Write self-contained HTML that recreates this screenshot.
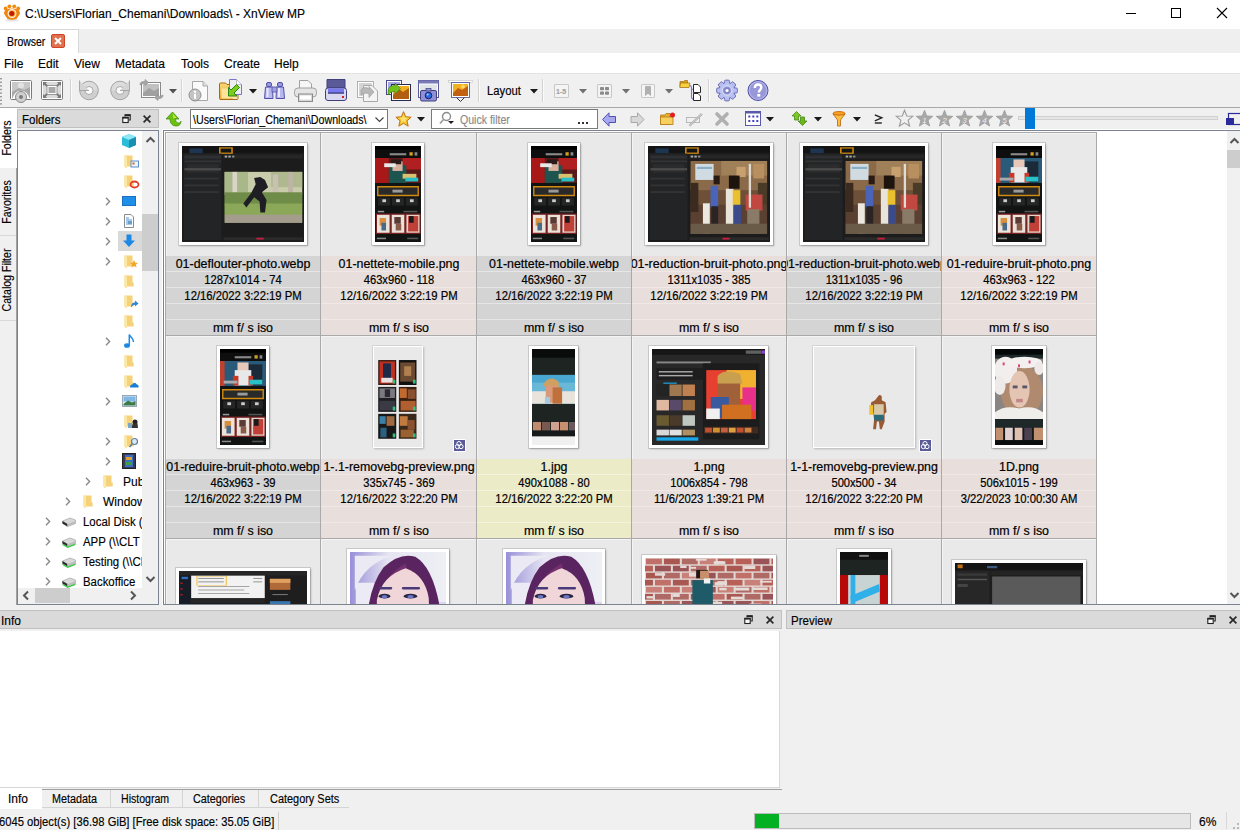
<!DOCTYPE html>
<html><head><meta charset="utf-8">
<style>
*{box-sizing:border-box;margin:0;padding:0}
html,body{width:1240px;height:830px;overflow:hidden;background:#f0f0f0;font-family:"Liberation Sans",sans-serif;font-size:12px;color:#000}
.a{position:absolute}
.t{position:absolute;white-space:nowrap;line-height:14px;-webkit-text-stroke:0.15px currentColor}
svg{position:absolute;overflow:visible}
.sx{transform-origin:0 50%}
.lb{position:absolute;height:16px;line-height:15px;text-align:center;white-space:nowrap;overflow:hidden;color:#111}
.lb span{position:absolute;left:50%;top:1px;white-space:nowrap;color:#000;-webkit-text-stroke:0.2px #000}
.th{position:absolute;background:#fff;padding:3px;box-shadow:0 0 0 1px rgba(0,0,0,.13),1px 1px 2px rgba(0,0,0,.25)}
.th.tr{background:#e9e9e9;border:1px solid #fff;padding:2px;box-shadow:-1px -1px 0 rgba(0,0,0,.08),1px 1px 2px rgba(0,0,0,.22)}
.im{position:relative;overflow:hidden}
.im i{position:absolute;display:block}
.bd{position:absolute;width:12px;height:12px;background:#5a5a9a;border:1px solid #fff;border-radius:1px}
</style></head><body>

<!-- TITLE BAR -->
<div class="a" style="left:0;top:0;width:1240px;height:29px;background:#fff"></div>
<svg style="left:0;top:0" width="26" height="26" viewBox="0 0 26 26">
  <ellipse cx="12" cy="20.3" rx="7" ry="1.2" fill="#e4e4e4"/>
  <circle cx="5.6" cy="8.5" r="1.9" fill="#f28a12"/><circle cx="9.4" cy="6.3" r="1.9" fill="#f28a12"/><circle cx="14.2" cy="6.3" r="1.9" fill="#f28a12"/><circle cx="18.2" cy="8.5" r="1.9" fill="#f28a12"/>
  <path d="M4 13.5Q4 8.5 12 8.5Q20 8.5 20 13.5L16.5 19Q12 20.5 7.5 19Z" fill="#f08410"/>
  <circle cx="12" cy="13.5" r="3.9" fill="#f7a838" stroke="#fff4dc" stroke-width="1.1"/>
  <circle cx="11.8" cy="13.5" r="2.5" fill="#c41a08"/>
</svg>
<div class="t" style="left:25px;top:7px">C:\Users\Florian_Chemani\Downloads\ - XnView MP</div>
<div class="a" style="left:1126px;top:13px;width:10px;height:1px;background:#000"></div>
<div class="a" style="left:1171px;top:8px;width:10px;height:10px;border:1px solid #000"></div>
<svg style="left:1217px;top:8px" width="10" height="10"><path d="M0 0L10 10M10 0L0 10" stroke="#000" stroke-width="1.1"/></svg>

<!-- TAB BAR -->
<div class="a" style="left:0;top:29px;width:1240px;height:23px;background:#efefef"></div>
<div class="a" style="left:0;top:29px;width:79px;height:24px;background:#fff;border-top:1px solid #d8d8d8;border-right:1px solid #d8d8d8"></div>
<div class="t sx" style="left:7px;top:35px;transform:scaleX(0.87)">Browser</div>
<div class="a" style="left:51px;top:34px;width:14px;height:14px;background:#e0714f;border:1px solid #d0442a;border-radius:2px"></div>
<svg style="left:54px;top:37px" width="8" height="8"><path d="M1 1L7 7M7 1L1 7" stroke="#fff" stroke-width="2"/></svg>

<!-- MENU BAR -->
<div class="a" style="left:0;top:53px;width:1240px;height:20px;background:#fff"></div>
<div class="t" style="left:4px;top:57px">File</div>
<div class="t" style="left:38px;top:57px">Edit</div>
<div class="t" style="left:74px;top:57px">View</div>
<div class="t" style="left:115px;top:57px">Metadata</div>
<div class="t" style="left:181px;top:57px">Tools</div>
<div class="t" style="left:224px;top:57px">Create</div>
<div class="t" style="left:274px;top:57px">Help</div>

<!-- TOOLBAR -->
<div class="a" style="left:0;top:73px;width:1240px;height:1px;background:#e3e3e3"></div>
<div class="a" style="left:0;top:107px;width:1240px;height:1px;background:#a8a8a8"></div>
<svg style="left:0;top:78px" width="3" height="27"><rect x="0" y="0.0" width="2" height="1.4" fill="#9a9a9a"/><rect x="0" y="3.6" width="2" height="1.4" fill="#9a9a9a"/><rect x="0" y="7.2" width="2" height="1.4" fill="#9a9a9a"/><rect x="0" y="10.8" width="2" height="1.4" fill="#9a9a9a"/><rect x="0" y="14.4" width="2" height="1.4" fill="#9a9a9a"/><rect x="0" y="18.0" width="2" height="1.4" fill="#9a9a9a"/><rect x="0" y="21.6" width="2" height="1.4" fill="#9a9a9a"/><rect x="0" y="25.2" width="2" height="1.4" fill="#9a9a9a"/></svg>
<svg style="left:10px;top:80px" width="22" height="23" viewBox="0 0 22 23"><rect x="0.5" y="0.5" width="21" height="19" rx="1" fill="#fff" stroke="#7a7a7a"/><rect x="2" y="2" width="18" height="16" fill="#c8c8c8"/><circle cx="11" cy="5.5" r="3" fill="#e2e2e2"/><path d="M2 12L9 8L14 10L20 7V18H2Z" fill="#a8a8a8"/><path d="M3.5 19A7.5 7.5 0 0 1 18.5 19" fill="#fff" stroke="#fff" stroke-width="1.5"/><circle cx="11" cy="17" r="5.5" fill="#d0d0d0" stroke="#8a8a8a"/><circle cx="11" cy="17" r="2" fill="#7a7a7a"/></svg>
<svg style="left:41px;top:80px" width="22" height="20" viewBox="0 0 22 20"><rect x="0.5" y="0.5" width="21" height="19" rx="1" fill="#fff" stroke="#7a7a7a"/><rect x="2" y="2" width="18" height="16" fill="#dadada"/><rect x="6" y="5.5" width="10" height="9" fill="#fff" stroke="#9a9a9a"/><rect x="7.5" y="7" width="7" height="6" fill="#a8a8a8"/><path d="M2.5 2.5L6 6M19.5 2.5L16 6M2.5 17.5L6 14M19.5 17.5L16 14" stroke="#7a7a7a" stroke-width="2"/><path d="M2 2H6L2 6ZM20 2H16L20 6ZM2 18H6L2 14ZM20 18H16L20 14Z" fill="#7a7a7a"/></svg>
<div class="a" style="left:70px;top:79px;width:1px;height:23px;background:#d4d4d4"></div><div class="a" style="left:71px;top:79px;width:1px;height:23px;background:#fafafa"></div>
<svg style="left:78px;top:80px" width="21" height="20" viewBox="0 0 21 20"><circle cx="11" cy="10.5" r="6.8" fill="none" stroke="#cfcfcf" stroke-width="5.5"/><path d="M4.2 10.5A6.8 6.8 0 0 1 17.8 10.5" fill="none" stroke="#dcdcdc" stroke-width="5.5"/><circle cx="11" cy="10.5" r="9.3" fill="none" stroke="#a0a0a0" stroke-width="0.9"/><circle cx="11" cy="10.5" r="4" fill="#fafafa" stroke="#a0a0a0" stroke-width="0.9"/><path d="M1.5 0.5V10.5H11" fill="#d4d4d4" stroke="#a0a0a0" stroke-width="0.9"/></svg>
<svg style="left:110px;top:80px" width="21" height="20" viewBox="0 0 21 20"><circle cx="10" cy="10.5" r="6.8" fill="none" stroke="#cfcfcf" stroke-width="5.5"/><path d="M3.2 10.5A6.8 6.8 0 0 1 16.8 10.5" fill="none" stroke="#dcdcdc" stroke-width="5.5"/><circle cx="10" cy="10.5" r="9.3" fill="none" stroke="#a0a0a0" stroke-width="0.9"/><circle cx="10" cy="10.5" r="4" fill="#fafafa" stroke="#a0a0a0" stroke-width="0.9"/><path d="M19.5 0.5V10.5H10" fill="#d4d4d4" stroke="#a0a0a0" stroke-width="0.9"/></svg>
<svg style="left:139px;top:79px" width="25" height="23" viewBox="0 0 25 23"><rect x="2.5" y="3.5" width="19" height="15" fill="#fff" stroke="#8a8a8a"/><rect x="4" y="5" width="16" height="12" fill="#c0c0c0"/><path d="M4 14L10 9L15 12L20 9V17H4Z" fill="#a0a0a0"/><path d="M1 6C1 3 3 2.5 6 2.5V0.5L9.5 3.5L6 6.5V4.5C4 4.5 3 5 1 6Z" fill="#a8a8a8" stroke="#8a8a8a" stroke-width="0.6"/><path d="M24 16C24 19 22 19.5 19 19.5V21.5L15.5 18.5L19 15.5V17.5C21 17.5 22 17 24 16Z" fill="#a8a8a8" stroke="#8a8a8a" stroke-width="0.6"/></svg>
<svg style="left:169px;top:89px" width="8" height="5"><path d="M0 0H8L4 4.5Z" fill="#505050"/></svg>
<div class="a" style="left:181px;top:79px;width:1px;height:23px;background:#d4d4d4"></div><div class="a" style="left:182px;top:79px;width:1px;height:23px;background:#fafafa"></div>
<svg style="left:188px;top:81px" width="21" height="21" viewBox="0 0 21 21"><path d="M4.5 0.5H15L19.5 5V19.5H4.5Z" fill="#fafafa" stroke="#a8a8a8"/><path d="M15 0.5V5H19.5" fill="#e0e0e0" stroke="#a8a8a8"/><circle cx="7" cy="14" r="6" fill="#c4c4c4" stroke="#909090"/><circle cx="7" cy="10.8" r="1.2" fill="#fff"/><rect x="6" y="12.8" width="2" height="5" fill="#fff"/></svg>
<svg style="left:219px;top:79px" width="24" height="22" viewBox="0 0 24 22"><defs><linearGradient id="fe" x1="0" x2="0" y1="0" y2="1"><stop offset="0" stop-color="#fbd878"/><stop offset="1" stop-color="#e8a830"/></linearGradient></defs><path d="M0.5 5Q0.5 4 1.5 4H6.5L8 5.5H13V20.5H1.5Q0.5 20.5 0.5 19.5Z" fill="url(#fe)" stroke="#a86a10"/><rect x="2.5" y="9.5" width="16" height="10" fill="#fde498"/><path d="M1 20.5H18.5Q19 20.5 19 19.5V14" fill="none" stroke="#a86a10"/><path d="M10.5 0.5H17.5L22.5 5.5V15.5H10.5Z" fill="#eceef2" stroke="#7878c8"/><path d="M17.5 0.5V5.5H22.5" fill="#fff" stroke="#9a9aa8" stroke-width="0.6"/><path d="M9.5 8.5V17H18L15 14L20.5 8.5L17.5 5.5L12 11Z" fill="#7ccc1c" stroke="#1a7a10" stroke-width="0.9"/></svg>
<svg style="left:249px;top:89px" width="8" height="5"><path d="M0 0H8L4 4.5Z" fill="#1a1a1a"/></svg>
<svg style="left:264px;top:82px" width="21" height="17" viewBox="0 0 21 17"><rect x="2.5" y="0.5" width="5" height="4" rx="1.5" fill="#9a9ae0" stroke="#5050a8"/><rect x="13.5" y="0.5" width="5" height="4" rx="1.5" fill="#9a9ae0" stroke="#5050a8"/><path d="M1.5 5H8.5L9 16.5H0.5Z" fill="#b8b8f0" stroke="#5050a8"/><path d="M12.5 5H19.5L20.5 16.5H12Z" fill="#b8b8f0" stroke="#5050a8"/><rect x="8" y="5" width="5" height="5" fill="#a0a0e0" stroke="#5050a8" stroke-width="0.8"/><rect x="2.5" y="6" width="2" height="9" fill="#e8e8ff"/><rect x="14" y="6" width="2" height="9" fill="#e8e8ff"/></svg>
<svg style="left:294px;top:80px" width="23" height="22" viewBox="0 0 23 22"><path d="M5.5 0.5H14L17.5 4V8.5H5.5Z" fill="#f6f6f6" stroke="#a0a0a0"/><rect x="0.5" y="8" width="22" height="9" rx="3.5" fill="#e4e4e4" stroke="#a0a0a0"/><rect x="4.5" y="14" width="14" height="7.5" fill="#d8d8d8" stroke="#8a8a8a"/><rect x="6" y="15.5" width="11" height="4" fill="#fff"/></svg>
<svg style="left:325px;top:79px" width="22" height="22" viewBox="0 0 22 22"><path d="M2 0.5H20V9H2Z" fill="#5a5a98" stroke="#40407a"/><rect x="0.5" y="9" width="21" height="12.5" rx="2.5" fill="#d8d8f0" stroke="#40407a"/><rect x="3" y="9.5" width="16" height="4.5" fill="#7878f0"/><rect x="3" y="13.5" width="16" height="1.2" fill="#30306a"/><rect x="17" y="17" width="2" height="2" fill="#d02020"/></svg>
<svg style="left:357px;top:81px" width="22" height="21" viewBox="0 0 22 21"><rect x="0.5" y="0.5" width="16" height="16" fill="#fff" stroke="#b0b0b0"/><rect x="2" y="2" width="13" height="13" fill="#d4d4d4"/><path d="M6.5 4.5H15L20.5 10V20.5H6.5Z" fill="#f4f4f4" stroke="#a8a8a8"/><path d="M4 9C6 6 10 6 12 8V5.5L17 11L12 16.5V13C10 11.5 7 12 4 14Z" fill="#b8b8b8" stroke="#999" stroke-width="0.6"/></svg>
<svg style="left:386px;top:80px" width="25" height="21" viewBox="0 0 25 21"><rect x="0.5" y="0.5" width="15" height="14" fill="#fff" stroke="#4a4a8a"/><rect x="2" y="2" width="12" height="11" fill="#a8a8e8"/><rect x="5.5" y="4.5" width="19" height="16" fill="#fff" stroke="#2a2a4a"/><rect x="7" y="6" width="16" height="13" fill="#f0b020"/><path d="M7 15L13 9L17 12L23 8V19H7Z" fill="#b06010"/><path d="M2 11C2 7 5 5.5 9 5.5V3L14.5 8.5L9 14V11.5C6 11.5 4 12 2 15Z" fill="#70c020" stroke="#408010" stroke-width="0.6"/></svg>
<svg style="left:418px;top:80px" width="22" height="22" viewBox="0 0 22 22"><rect x="0.5" y="0.5" width="20" height="17" fill="#fff" stroke="#5a5a9a"/><rect x="0.5" y="0.5" width="20" height="3" fill="#7a7ab8"/><rect x="2" y="4.5" width="17" height="12" fill="#e0e4e8"/><rect x="2.5" y="10.5" width="16" height="10.5" rx="1.5" fill="#9090d8" stroke="#40407a"/><rect x="8" y="8.5" width="5" height="2.5" fill="#9090d8" stroke="#40407a" stroke-width="0.7"/><circle cx="10.5" cy="15.5" r="3.3" fill="#2a6ae0" stroke="#20205a"/><circle cx="9.6" cy="14.6" r="1" fill="#a0c8ff"/></svg>
<svg style="left:448px;top:80px" width="25" height="22" viewBox="0 0 25 22"><rect x="0.5" y="0.5" width="24" height="2" fill="#fff" stroke="#c0c0c0" stroke-width="0.6"/><rect x="3.5" y="2.5" width="18" height="15" fill="#fff" stroke="#6a6aa8"/><rect x="5" y="4" width="15" height="12" fill="#f0b020"/><path d="M5 13L10 8L14 10L20 6V16H5Z" fill="#c06010"/><circle cx="15" cy="6.5" r="2" fill="#ffd860"/><path d="M8.5 17.5L12.5 21.5L16.5 17.5" stroke="#303030" fill="none" stroke-width="1"/></svg>
<div class="a" style="left:478px;top:79px;width:1px;height:23px;background:#d4d4d4"></div><div class="a" style="left:479px;top:79px;width:1px;height:23px;background:#fafafa"></div>
<div class="t sx" style="left:487px;top:84px;transform:scaleX(0.94)">Layout</div>
<svg style="left:530px;top:89px" width="8" height="5"><path d="M0 0H8L4 4.5Z" fill="#1a1a1a"/></svg>
<div class="a" style="left:542px;top:79px;width:1px;height:23px;background:#d4d4d4"></div><div class="a" style="left:543px;top:79px;width:1px;height:23px;background:#fafafa"></div>
<div class="a" style="left:554px;top:84px;width:15px;height:14px;background:#f4f4f4;border:1px solid #c8c8c8;border-radius:1px"></div><div class="t" style="left:556px;top:85px;font-size:7px;color:#a0a0a0;font-weight:bold">1-5</div>
<svg style="left:579px;top:89px" width="8" height="5"><path d="M0 0H8L4 4.5Z" fill="#707070"/></svg>
<div class="a" style="left:597px;top:84px;width:15px;height:14px;background:#f4f4f4;border:1px solid #c8c8c8;border-radius:1px"></div><svg style="left:600px;top:87px" width="9" height="8"><rect x="0" y="0" width="4" height="3.3" rx="0.8" fill="#8a8a8a"/><rect x="5" y="0" width="4" height="3.3" rx="0.8" fill="#8a8a8a"/><rect x="0" y="4.5" width="4" height="3.3" rx="0.8" fill="#8a8a8a"/><rect x="5" y="4.5" width="4" height="3.3" rx="0.8" fill="#8a8a8a"/></svg>
<svg style="left:622px;top:89px" width="8" height="5"><path d="M0 0H8L4 4.5Z" fill="#707070"/></svg>
<div class="a" style="left:641px;top:84px;width:14px;height:14px;background:#f4f4f4;border:1px solid #c8c8c8;border-radius:1px"></div><svg style="left:645px;top:86px" width="6" height="10"><path d="M0.5 0.5H5.5V9.5L3 7L0.5 9.5Z" fill="#b0b0b0" stroke="#9a9a9a" stroke-width="0.6"/></svg>
<svg style="left:665px;top:89px" width="8" height="5"><path d="M0 0H8L4 4.5Z" fill="#707070"/></svg>
<svg style="left:679px;top:80px" width="23" height="21" viewBox="0 0 23 21"><path d="M1 1.5H4.5L5.5 0.5H8.5V7H1Z" fill="#d8a020" stroke="#a07010" stroke-width="0.7"/><path d="M1.5 3H11L10 7.5H0.8Z" fill="#f8d040" stroke="#a07010" stroke-width="0.7"/><path d="M10.5 5.5Q12.5 5.5 12.5 8V17Q12.5 19 14.5 19M12.5 10.5Q12.5 9 14.5 9" stroke="#7a7ac8" fill="none" stroke-width="1.1"/><path d="M14.5 4.5H19L21.5 7V12.5H14.5Z" fill="#fff" stroke="#111" stroke-width="0.9"/><path d="M14.5 13.5H19L21.5 16V20.5H14.5Z" fill="#fff" stroke="#111" stroke-width="0.9"/></svg>
<div class="a" style="left:708px;top:79px;width:1px;height:23px;background:#d4d4d4"></div><div class="a" style="left:709px;top:79px;width:1px;height:23px;background:#fafafa"></div>
<svg style="left:716px;top:80px" width="22" height="21" viewBox="-11 -10.5 22 21"><circle r="8" fill="#b4bcf0" stroke="#5a5aa8" stroke-width="0.8"/><rect x="-2.6" y="-10.4" width="5.2" height="4.5" rx="1.3" fill="#b4bcf0" stroke="#5a5aa8" stroke-width="0.8" transform="rotate(0)"/><rect x="-2.6" y="-10.4" width="5.2" height="4.5" rx="1.3" fill="#b4bcf0" stroke="#5a5aa8" stroke-width="0.8" transform="rotate(45)"/><rect x="-2.6" y="-10.4" width="5.2" height="4.5" rx="1.3" fill="#b4bcf0" stroke="#5a5aa8" stroke-width="0.8" transform="rotate(90)"/><rect x="-2.6" y="-10.4" width="5.2" height="4.5" rx="1.3" fill="#b4bcf0" stroke="#5a5aa8" stroke-width="0.8" transform="rotate(135)"/><rect x="-2.6" y="-10.4" width="5.2" height="4.5" rx="1.3" fill="#b4bcf0" stroke="#5a5aa8" stroke-width="0.8" transform="rotate(180)"/><rect x="-2.6" y="-10.4" width="5.2" height="4.5" rx="1.3" fill="#b4bcf0" stroke="#5a5aa8" stroke-width="0.8" transform="rotate(225)"/><rect x="-2.6" y="-10.4" width="5.2" height="4.5" rx="1.3" fill="#b4bcf0" stroke="#5a5aa8" stroke-width="0.8" transform="rotate(270)"/><rect x="-2.6" y="-10.4" width="5.2" height="4.5" rx="1.3" fill="#b4bcf0" stroke="#5a5aa8" stroke-width="0.8" transform="rotate(315)"/><circle r="7.4" fill="#bcc4f2"/><circle r="4.6" fill="#9494d4" stroke="#e2e6ff" stroke-width="0.9"/><circle r="3" fill="#8282c6"/><circle r="1.6" fill="#fff"/></svg>
<svg style="left:747px;top:80px" width="22" height="21" viewBox="0 0 22 21"><circle cx="11" cy="10.5" r="10" fill="#9898d8" stroke="#5050a8"/><circle cx="11" cy="10.5" r="8.8" fill="none" stroke="#c0c0f0" stroke-width="0.8"/><path d="M7.8 8C7.8 5.5 9.5 4.5 11 4.5C13 4.5 14.3 5.8 14.3 7.6C14.3 9.8 11.8 10 11.8 12.5" stroke="#fff" stroke-width="2.4" fill="none"/><rect x="10.3" y="14" width="3" height="2.6" fill="#fff"/></svg>
<svg style="left:166px;top:112px" width="16" height="15" viewBox="0 0 16 15"><path d="M6.5 0L13 7H9.5C9.5 9.5 10.5 11 12.5 11C13.5 11 14.5 10.3 15 9.3C15 12.5 13 14 10.5 14C6.5 14 4 11.5 4 7H0Z" fill="#6cc010" stroke="#3a8a0a" stroke-width="0.7"/><path d="M6.5 1.5L10.5 6H8V7.5" fill="#c8f040" /></svg>
<div class="a" style="left:190px;top:109px;width:198px;height:20px;background:#fff;border:1px solid #7a7a7a"></div>
<div class="t sx" style="left:193px;top:113px;transform:scaleX(0.888)">\Users\Florian_Chemani\Downloads\</div>
<svg style="left:375px;top:117px" width="9" height="6"><path d="M0.5 0.5L4.5 4.5L8.5 0.5" stroke="#404040" stroke-width="1.1" fill="none"/></svg>
<svg style="left:395px;top:111px" width="17" height="16" viewBox="0 0 17 16"><path d="M8.50 0.70L10.62 5.79L16.11 6.23L11.92 9.81L13.20 15.17L8.50 12.30L3.80 15.17L5.08 9.81L0.89 6.23L6.38 5.79Z" fill="#f8c830" stroke="#c07010" stroke-width="1"/><path d="M8.50 3.70L9.68 6.58L12.78 6.81L10.40 8.82L11.15 11.84L8.50 10.20L5.85 11.84L6.60 8.82L4.22 6.81L7.32 6.58Z" fill="#fff3a0" opacity="0.6"/></svg>
<svg style="left:417px;top:117px" width="8" height="5"><path d="M0 0H8L4 4.5Z" fill="#1a1a1a"/></svg>
<div class="a" style="left:431px;top:109px;width:167px;height:20px;background:#fff;border:1px solid #7a7a7a"></div>
<svg style="left:439px;top:111px" width="16" height="14" viewBox="0 0 16 14"><circle cx="7.5" cy="5.5" r="4" fill="none" stroke="#8a8a8a" stroke-width="1.4"/><path d="M4.5 8.5L1 12.5" stroke="#9a9a9a" stroke-width="1.6"/><path d="M9 10H15L12 13Z" fill="#1a1a1a"/></svg>
<div class="t sx" style="left:460px;top:113px;color:#8a8a8a;transform:scaleX(0.88)">Quick filter</div>
<svg style="left:578px;top:122px" width="11" height="3"><rect x="0" y="0" width="2" height="2" fill="#333"/><rect x="4" y="0" width="2" height="2" fill="#333"/><rect x="8" y="0" width="2" height="2" fill="#333"/></svg>
<svg style="left:602px;top:112px" width="15" height="15" viewBox="0 0 15 15"><path d="M0.5 7.5L7 0.8V4.5H13.5V10.5H7V14.2Z" fill="#a8a8f0" stroke="#5050b0" stroke-width="1"/></svg>
<svg style="left:630px;top:112px" width="15" height="15" viewBox="0 0 15 15"><path d="M14 7.5L7.5 0.8V4.5H1V10.5H7.5V14.2Z" fill="#d8d8d8" stroke="#a8a8a8" stroke-width="1"/></svg>
<svg style="left:660px;top:112px" width="16" height="14" viewBox="0 0 16 14"><path d="M0.5 3H5L6 1.5H10V12.5H0.5Z" fill="#e8b030" stroke="#b07a10" stroke-width="0.8"/><path d="M0.5 5H13V12.5H0.5Z" fill="#f8d060" stroke="#b07a10" stroke-width="0.8"/><circle cx="12.5" cy="3" r="2.5" fill="#e02020"/></svg>
<svg style="left:686px;top:112px" width="17" height="14" viewBox="0 0 17 14"><rect x="0.5" y="5.5" width="13" height="5" fill="#f0f0f0" stroke="#b8b8b8"/><path d="M3 13L15 1.5L16.3 2.8L4.3 14Z" fill="#c8c8c8" stroke="#a0a0a0" stroke-width="0.6"/></svg>
<svg style="left:715px;top:112px" width="14" height="14" viewBox="0 0 14 14"><path d="M2 2L12 12M12 2L2 12" stroke="#b0b0b0" stroke-width="3.6" stroke-linecap="round"/></svg>
<svg style="left:745px;top:111px" width="16" height="15" viewBox="0 0 16 15"><rect x="0.5" y="0.5" width="15" height="14" fill="#fff" stroke="#5a5aa8"/><rect x="0.5" y="0.5" width="15" height="2" fill="#5a5aa8"/><rect x="3.3" y="4.5" width="2" height="2" fill="#4040c8"/><rect x="3.3" y="9.0" width="2" height="2" fill="#4040c8"/><rect x="7.3" y="4.5" width="2" height="2" fill="#4040c8"/><rect x="7.3" y="9.0" width="2" height="2" fill="#4040c8"/><rect x="11.3" y="4.5" width="2" height="2" fill="#4040c8"/><rect x="11.3" y="9.0" width="2" height="2" fill="#4040c8"/></svg>
<svg style="left:766px;top:117px" width="8" height="5"><path d="M0 0H8L4 4.5Z" fill="#1a1a1a"/></svg>
<svg style="left:792px;top:111px" width="15" height="15" viewBox="0 0 15 15"><path d="M4.5 0.5L9 5H6.5V9H2.5V5H0Z" fill="#80c820" stroke="#3a8010" stroke-width="0.7"/><path d="M10.5 14.5L15 10H12.5V6H8.5V10H6Z" fill="#70b818" stroke="#3a8010" stroke-width="0.7"/></svg>
<svg style="left:814px;top:117px" width="8" height="5"><path d="M0 0H8L4 4.5Z" fill="#1a1a1a"/></svg>
<svg style="left:832px;top:111px" width="14" height="16" viewBox="0 0 14 16"><ellipse cx="7" cy="2.5" rx="6" ry="2" fill="#f8a020" stroke="#c06010" stroke-width="0.8"/><path d="M1 3L5.5 9V15H8.5V9L13 3C11 4.5 3 4.5 1 3Z" fill="#f8c040" stroke="#c06010" stroke-width="0.8"/></svg>
<svg style="left:853px;top:117px" width="8" height="5"><path d="M0 0H8L4 4.5Z" fill="#1a1a1a"/></svg>
<svg style="left:874px;top:114px" width="9" height="10"><path d="M0.8 0.8L7.8 3.8L0.8 6.8" stroke="#222" stroke-width="1.4" fill="none"/><path d="M0.8 9H7.8" stroke="#222" stroke-width="1.4"/></svg>
<svg style="left:895px;top:109px" width="19" height="19" viewBox="0 0 19 19"><path d="M9.50 1.30L11.73 6.93L17.77 7.31L13.11 11.17L14.61 17.04L9.50 13.80L4.39 17.04L5.89 11.17L1.23 7.31L7.27 6.93Z" fill="#f0f0f0" stroke="#9a9a9a" stroke-width="1.1"/></svg>
<svg style="left:915px;top:109px" width="19" height="19" viewBox="0 0 19 19"><path d="M9.50 1.30L11.73 6.93L17.77 7.31L13.11 11.17L14.61 17.04L9.50 13.80L4.39 17.04L5.89 11.17L1.23 7.31L7.27 6.93Z" fill="#a8a8a8" stroke="#9a9a9a" stroke-width="0.8"/><text x="9.5" y="14" font-size="8" text-anchor="middle" fill="#eee" font-family="Liberation Sans" font-style="italic">1</text></svg>
<svg style="left:935px;top:109px" width="19" height="19" viewBox="0 0 19 19"><path d="M9.50 1.30L11.73 6.93L17.77 7.31L13.11 11.17L14.61 17.04L9.50 13.80L4.39 17.04L5.89 11.17L1.23 7.31L7.27 6.93Z" fill="#a8a8a8" stroke="#9a9a9a" stroke-width="0.8"/><text x="9.5" y="14" font-size="8" text-anchor="middle" fill="#eee" font-family="Liberation Sans" font-style="italic">2</text></svg>
<svg style="left:955px;top:109px" width="19" height="19" viewBox="0 0 19 19"><path d="M9.50 1.30L11.73 6.93L17.77 7.31L13.11 11.17L14.61 17.04L9.50 13.80L4.39 17.04L5.89 11.17L1.23 7.31L7.27 6.93Z" fill="#a8a8a8" stroke="#9a9a9a" stroke-width="0.8"/><text x="9.5" y="14" font-size="8" text-anchor="middle" fill="#eee" font-family="Liberation Sans" font-style="italic">3</text></svg>
<svg style="left:975px;top:109px" width="19" height="19" viewBox="0 0 19 19"><path d="M9.50 1.30L11.73 6.93L17.77 7.31L13.11 11.17L14.61 17.04L9.50 13.80L4.39 17.04L5.89 11.17L1.23 7.31L7.27 6.93Z" fill="#a8a8a8" stroke="#9a9a9a" stroke-width="0.8"/><text x="9.5" y="14" font-size="8" text-anchor="middle" fill="#eee" font-family="Liberation Sans" font-style="italic">4</text></svg>
<svg style="left:995px;top:109px" width="19" height="19" viewBox="0 0 19 19"><path d="M9.50 1.30L11.73 6.93L17.77 7.31L13.11 11.17L14.61 17.04L9.50 13.80L4.39 17.04L5.89 11.17L1.23 7.31L7.27 6.93Z" fill="#a8a8a8" stroke="#9a9a9a" stroke-width="0.8"/><text x="9.5" y="14" font-size="8" text-anchor="middle" fill="#eee" font-family="Liberation Sans" font-style="italic">5</text></svg>
<div class="a" style="left:1018px;top:116px;width:200px;height:4px;background:#e6e6e6;border:1px solid #d0d0d0"></div>
<div class="a" style="left:1025px;top:108px;width:10px;height:21px;background:#0078d7"></div>
<svg style="left:1226px;top:113px" width="14" height="12"><rect x="2.5" y="0.5" width="13" height="11" fill="none" stroke="#2a2a9a" stroke-width="1.2"/><rect x="0" y="5" width="8" height="7" fill="#2a2a9a"/></svg>

<!-- LEFT VERTICAL TABS -->
<div class="a" style="left:0;top:108px;width:17px;height:500px;background:#f0f0f0"></div>
<div class="a" style="left:16px;top:168px;width:1px;height:437px;background:#a0a0a0"></div>
<div class="a" style="left:0;top:108px;width:17px;height:60px;background:#fff"></div>
<div class="a" style="left:0;top:235px;width:16px;height:1px;background:#d9d9d9"></div>
<div class="a" style="left:0;top:320px;width:16px;height:1px;background:#d9d9d9"></div>
<div class="t" style="left:7px;top:137.5px;transform:translate(-50%,-50%) rotate(-90deg) scaleX(0.88);font-size:12px">Folders</div>
<div class="t" style="left:7px;top:202px;transform:translate(-50%,-50%) rotate(-90deg) scaleX(0.88);font-size:12px">Favorites</div>
<div class="t" style="left:7px;top:280px;transform:translate(-50%,-50%) rotate(-90deg) scaleX(0.88);font-size:12px">Catalog Filter</div>

<!-- FOLDERS PANEL -->
<div class="a" style="left:17px;top:109px;width:142px;height:19px;background:#dadada;border:1px solid #c0c0c0"></div>
<div class="t sx" style="left:22px;top:113px;transform:scaleX(0.96)">Folders</div>
<svg style="left:122px;top:114px" width="9" height="9" viewBox="0 0 9 9"><path d="M3 2.5V0.8H8.2V6H6.5" stroke="#222" stroke-width="1.1" fill="none"/><rect x="3" y="0.5" width="5.5" height="1.6" fill="#222"/><rect x="0.8" y="3.3" width="5.4" height="5.2" fill="#fafafa" stroke="#222" stroke-width="1.1"/><rect x="0.5" y="3" width="6" height="1.6" fill="#222"/></svg><svg style="left:143px;top:115px" width="8" height="8"><path d="M0.6 0.6L7.4 7.4M7.4 0.6L0.6 7.4" stroke="#2a2a2a" stroke-width="1.7"/></svg>
<div class="a" style="left:17px;top:130px;width:142px;height:475px;background:#fff;border:1px solid #7b8290"></div>
<div class="a" style="left:18px;top:131px;width:124px;height:457px;overflow:hidden;background:#fff">
<svg style="left:103px;top:2px" width="16" height="16" viewBox="0 0 16 16"><path d="M8 1L15 4V12L8 15L1 12V4Z" fill="#2bbcd8"/><path d="M8 1L15 4L8 7L1 4Z" fill="#8fe6f4"/><path d="M8 7L15 4V12L8 15Z" fill="#1a8fb0"/></svg>
<div class="a" style="left:105px;top:22px"><svg style="left:0px;top:0px" width="16" height="16" viewBox="0 0 16 16"><path d="M1.5 2.5H9.5V9.5H10.7V13.5H4L3.2 15.3L1.5 13.5Z" fill="#f5d27a"/><path d="M1.5 2.5L4 3.8V14.6L3.2 15.3L1.5 13.5Z" fill="#fbe7a6"/><rect x="8" y="8" width="7.5" height="6" fill="#eef4fb" stroke="#5b8fc9" stroke-width="1"/><rect x="9.5" y="9.5" width="2" height="2" fill="#d06030"/></svg></div>
<div class="a" style="left:105px;top:42px"><svg style="left:0px;top:0px" width="16" height="16" viewBox="0 0 16 16"><path d="M1.5 2.5H9.5V9.5H10.7V13.5H4L3.2 15.3L1.5 13.5Z" fill="#f5d27a"/><path d="M1.5 2.5L4 3.8V14.6L3.2 15.3L1.5 13.5Z" fill="#fbe7a6"/><ellipse cx="11.5" cy="11.5" rx="4" ry="3" fill="none" stroke="#e03a2a" stroke-width="1.8"/></svg></div>
<div class="a" style="left:104px;top:65px;width:14px;height:10px;background:#1e8fe8;border:1px solid #1a6fc0"></div>
<svg style="left:103px;top:82px" width="16" height="16" viewBox="0 0 16 16"><path d="M3.5 1.5H10L12.5 4V14.5H3.5Z" fill="#fff" stroke="#8a8a8a"/><path d="M5 5H8M5 7H11M5 9H11M5 11H11" stroke="#4a90d8" stroke-width="1"/><rect x="7" y="8" width="4" height="3" fill="#6aa0c8"/></svg>
<div class="a" style="left:100px;top:100px;width:24px;height:20px;background:#d9d9d9"></div>
<svg style="left:103px;top:102px" width="16" height="16" viewBox="0 0 16 16"><path d="M5.5 1.5H10.5V7.5H14L8 14L2 7.5H5.5Z" fill="#1e88e5"/></svg>
<div class="a" style="left:105px;top:122px"><svg style="left:0px;top:0px" width="16" height="16" viewBox="0 0 16 16"><path d="M1.5 2.5H9.5V9.5H10.7V13.5H4L3.2 15.3L1.5 13.5Z" fill="#f5d27a"/><path d="M1.5 2.5L4 3.8V14.6L3.2 15.3L1.5 13.5Z" fill="#fbe7a6"/><path d="M11 7L12.2 9.8L15 10L12.8 11.8L13.6 14.6L11 13L8.4 14.6L9.2 11.8L7 10L9.8 9.8Z" fill="#f5a623"/></svg></div>
<div class="a" style="left:105px;top:142px"><svg style="left:0px;top:0px" width="16" height="16" viewBox="0 0 16 16"><path d="M1.5 2.5H9.5V9.5H10.7V13.5H4L3.2 15.3L1.5 13.5Z" fill="#f5d27a"/><path d="M1.5 2.5L4 3.8V14.6L3.2 15.3L1.5 13.5Z" fill="#fbe7a6"/></svg></div>
<div class="a" style="left:105px;top:162px"><svg style="left:0px;top:0px" width="16" height="16" viewBox="0 0 16 16"><path d="M1.5 2.5H9.5V9.5H10.7V13.5H4L3.2 15.3L1.5 13.5Z" fill="#f5d27a"/><path d="M1.5 2.5L4 3.8V14.6L3.2 15.3L1.5 13.5Z" fill="#fbe7a6"/><path d="M8 14.5C8 11 9.5 9.5 12 9.5V7.5L15.5 10.5L12 13.5V11.8C10.5 11.8 9.5 12.5 8 14.5Z" fill="#2a86d8"/></svg></div>
<div class="a" style="left:105px;top:182px"><svg style="left:0px;top:0px" width="16" height="16" viewBox="0 0 16 16"><path d="M1.5 2.5H9.5V9.5H10.7V13.5H4L3.2 15.3L1.5 13.5Z" fill="#f5d27a"/><path d="M1.5 2.5L4 3.8V14.6L3.2 15.3L1.5 13.5Z" fill="#fbe7a6"/></svg></div>
<svg style="left:103px;top:202px" width="16" height="16" viewBox="0 0 16 16"><ellipse cx="6" cy="12.5" rx="3" ry="2.3" fill="#1e88e5"/><path d="M8.3 12.5V1.5C9 4 12.5 5 12.5 9" stroke="#1e88e5" stroke-width="1.5" fill="none"/></svg>
<div class="a" style="left:105px;top:222px"><svg style="left:0px;top:0px" width="16" height="16" viewBox="0 0 16 16"><path d="M1.5 2.5H9.5V9.5H10.7V13.5H4L3.2 15.3L1.5 13.5Z" fill="#f5d27a"/><path d="M1.5 2.5L4 3.8V14.6L3.2 15.3L1.5 13.5Z" fill="#fbe7a6"/></svg></div>
<div class="a" style="left:105px;top:242px"><svg style="left:0px;top:0px" width="16" height="16" viewBox="0 0 16 16"><path d="M1.5 2.5H9.5V9.5H10.7V13.5H4L3.2 15.3L1.5 13.5Z" fill="#f5d27a"/><path d="M1.5 2.5L4 3.8V14.6L3.2 15.3L1.5 13.5Z" fill="#fbe7a6"/><path d="M7 14.5H15.5C16 12.5 15 11.5 13.8 11.6C13.3 9.5 10 9.3 9.5 11.5C8 11.3 7 12.5 7 14.5Z" fill="#1a7fd4"/></svg></div>
<svg style="left:104px;top:264px" width="15" height="12" viewBox="0 0 15 12"><rect x="0.5" y="0.5" width="14" height="11" fill="#dfe8ef" stroke="#9aa8b4"/><rect x="1.5" y="1.5" width="12" height="5" fill="#7fb8e6"/><path d="M1.5 9L6 5.5L10 7.5L13.5 6V10.5H1.5Z" fill="#3c7a4a"/></svg>
<div class="a" style="left:105px;top:282px"><svg style="left:0px;top:0px" width="16" height="16" viewBox="0 0 16 16"><path d="M1.5 2.5H9.5V9.5H10.7V13.5H4L3.2 15.3L1.5 13.5Z" fill="#f5d27a"/><path d="M1.5 2.5L4 3.8V14.6L3.2 15.3L1.5 13.5Z" fill="#fbe7a6"/><circle cx="12" cy="9" r="2.5" fill="#222"/><path d="M8 15L10 10.5H14.5L15 15Z" fill="#333"/><rect x="5" y="10" width="4" height="5" fill="#7aa6c8"/></svg></div>
<div class="a" style="left:105px;top:302px"><svg style="left:0px;top:0px" width="16" height="16" viewBox="0 0 16 16"><path d="M1.5 2.5H9.5V9.5H10.7V13.5H4L3.2 15.3L1.5 13.5Z" fill="#f5d27a"/><path d="M1.5 2.5L4 3.8V14.6L3.2 15.3L1.5 13.5Z" fill="#fbe7a6"/><circle cx="11.5" cy="8.5" r="3" fill="#dceaf6" stroke="#5a7fa0" stroke-width="1.2"/><path d="M9.3 10.8L6.5 14" stroke="#5a7fa0" stroke-width="1.6"/></svg></div>
<svg style="left:104px;top:322px" width="14" height="16" viewBox="0 0 14 16"><rect x="0.5" y="0.5" width="13" height="15" fill="#3a3a5a" stroke="#222"/><rect x="3" y="2" width="8" height="12" fill="#3a70c0"/><rect x="4" y="4" width="6" height="3" fill="#e0a030"/><rect x="4" y="9" width="6" height="3" fill="#40a040"/></svg>
<svg style="left:87px;top:66px" width="6" height="9"><path d="M1 0.8L4.6 4.5L1 8.2" stroke="#8a8a8a" stroke-width="1.4" fill="none"/></svg>
<svg style="left:87px;top:86px" width="6" height="9"><path d="M1 0.8L4.6 4.5L1 8.2" stroke="#8a8a8a" stroke-width="1.4" fill="none"/></svg>
<svg style="left:87px;top:106px" width="6" height="9"><path d="M1 0.8L4.6 4.5L1 8.2" stroke="#8a8a8a" stroke-width="1.4" fill="none"/></svg>
<svg style="left:87px;top:126px" width="6" height="9"><path d="M1 0.8L4.6 4.5L1 8.2" stroke="#8a8a8a" stroke-width="1.4" fill="none"/></svg>
<svg style="left:87px;top:206px" width="6" height="9"><path d="M1 0.8L4.6 4.5L1 8.2" stroke="#8a8a8a" stroke-width="1.4" fill="none"/></svg>
<svg style="left:87px;top:266px" width="6" height="9"><path d="M1 0.8L4.6 4.5L1 8.2" stroke="#8a8a8a" stroke-width="1.4" fill="none"/></svg>
<svg style="left:87px;top:306px" width="6" height="9"><path d="M1 0.8L4.6 4.5L1 8.2" stroke="#8a8a8a" stroke-width="1.4" fill="none"/></svg>
<svg style="left:87px;top:326px" width="6" height="9"><path d="M1 0.8L4.6 4.5L1 8.2" stroke="#8a8a8a" stroke-width="1.4" fill="none"/></svg>
<svg style="left:67px;top:346px" width="6" height="9"><path d="M1 0.8L4.6 4.5L1 8.2" stroke="#8a8a8a" stroke-width="1.4" fill="none"/></svg>
<div class="a" style="left:84px;top:342px"><svg style="left:0px;top:0px" width="16" height="16" viewBox="0 0 16 16"><path d="M1.5 2.5H9.5V9.5H10.7V13.5H4L3.2 15.3L1.5 13.5Z" fill="#f5d27a"/><path d="M1.5 2.5L4 3.8V14.6L3.2 15.3L1.5 13.5Z" fill="#fbe7a6"/></svg></div>
<div class="t" style="left:105px;top:344px">Pub</div>
<svg style="left:47px;top:366px" width="6" height="9"><path d="M1 0.8L4.6 4.5L1 8.2" stroke="#8a8a8a" stroke-width="1.4" fill="none"/></svg>
<div class="a" style="left:64px;top:362px"><svg style="left:0px;top:0px" width="16" height="16" viewBox="0 0 16 16"><path d="M1.5 2.5H9.5V9.5H10.7V13.5H4L3.2 15.3L1.5 13.5Z" fill="#f5d27a"/><path d="M1.5 2.5L4 3.8V14.6L3.2 15.3L1.5 13.5Z" fill="#fbe7a6"/></svg></div>
<div class="t" style="left:85px;top:364px">Windows</div>
<svg style="left:27px;top:386px" width="6" height="9"><path d="M1 0.8L4.6 4.5L1 8.2" stroke="#8a8a8a" stroke-width="1.4" fill="none"/></svg>
<svg style="left:43px;top:382px" width="16" height="16" viewBox="0 0 16 16"><path d="M1.5 8L9 5L14.5 7V10.5L6.5 13.5L1.5 10.5Z" fill="#d8d8d8" stroke="#9a9a9a" stroke-width="0.6"/><path d="M1.5 8L6.5 11V13.5L1.5 10.5Z" fill="#2a2a2a"/><path d="M6.5 11L14.5 8V10.5L6.5 13.5Z" fill="#bdbdbd"/></svg>
<div class="t sx" style="left:65px;top:384px;transform:scaleX(0.95)">Local Disk (C:)</div>
<svg style="left:27px;top:406px" width="6" height="9"><path d="M1 0.8L4.6 4.5L1 8.2" stroke="#8a8a8a" stroke-width="1.4" fill="none"/></svg>
<svg style="left:43px;top:402px" width="16" height="16" viewBox="0 0 16 16"><path d="M1.5 8L9 5L14.5 7V10.5L6.5 13.5L1.5 10.5Z" fill="#d8d8d8" stroke="#9a9a9a" stroke-width="0.6"/><path d="M1.5 8L6.5 11V13.5L1.5 10.5Z" fill="#2a2a2a"/><path d="M6.5 11L14.5 8V10.5L6.5 13.5Z" fill="#bdbdbd"/><path d="M1.5 10.5L6.5 13.5L14.5 10.5V12L6.5 15L1.5 12Z" fill="#3ec84a"/></svg>
<div class="t sx" style="left:65px;top:404px;transform:scaleX(0.95)">APP (\\CLT</div>
<svg style="left:27px;top:426px" width="6" height="9"><path d="M1 0.8L4.6 4.5L1 8.2" stroke="#8a8a8a" stroke-width="1.4" fill="none"/></svg>
<svg style="left:43px;top:422px" width="16" height="16" viewBox="0 0 16 16"><path d="M1.5 8L9 5L14.5 7V10.5L6.5 13.5L1.5 10.5Z" fill="#d8d8d8" stroke="#9a9a9a" stroke-width="0.6"/><path d="M1.5 8L6.5 11V13.5L1.5 10.5Z" fill="#2a2a2a"/><path d="M6.5 11L14.5 8V10.5L6.5 13.5Z" fill="#bdbdbd"/><path d="M1.5 10.5L6.5 13.5L14.5 10.5V12L6.5 15L1.5 12Z" fill="#3ec84a"/></svg>
<div class="t sx" style="left:65px;top:424px;transform:scaleX(0.95)">Testing (\\CLT</div>
<svg style="left:27px;top:446px" width="6" height="9"><path d="M1 0.8L4.6 4.5L1 8.2" stroke="#8a8a8a" stroke-width="1.4" fill="none"/></svg>
<svg style="left:43px;top:442px" width="16" height="16" viewBox="0 0 16 16"><path d="M1.5 8L9 5L14.5 7V10.5L6.5 13.5L1.5 10.5Z" fill="#d8d8d8" stroke="#9a9a9a" stroke-width="0.6"/><path d="M1.5 8L6.5 11V13.5L1.5 10.5Z" fill="#2a2a2a"/><path d="M6.5 11L14.5 8V10.5L6.5 13.5Z" fill="#bdbdbd"/><path d="M1.5 10.5L6.5 13.5L14.5 10.5V12L6.5 15L1.5 12Z" fill="#3ec84a"/></svg>
<div class="t sx" style="left:65px;top:444px;transform:scaleX(0.95)">Backoffice</div>
</div>
<div class="a" style="left:142px;top:131px;width:16px;height:457px;background:#f0f0f0"></div>
<div class="a" style="left:142px;top:214px;width:16px;height:57px;background:#cdcdcd"></div>
<svg style="left:146px;top:137px" width="9" height="6"><path d="M0.5 5L4.5 1L8.5 5" stroke="#555" stroke-width="2" fill="none"/></svg>
<svg style="left:146px;top:576px" width="9" height="6"><path d="M0.5 1L4.5 5L8.5 1" stroke="#555" stroke-width="2" fill="none"/></svg>
<div class="a" style="left:18px;top:588px;width:140px;height:16px;background:#f0f0f0"></div>
<div class="a" style="left:35px;top:588px;width:35px;height:15px;background:#cdcdcd"></div>
<svg style="left:23px;top:591px" width="6" height="9"><path d="M5 0.5L1 4.5L5 8.5" stroke="#555" stroke-width="2" fill="none"/></svg>
<svg style="left:130px;top:591px" width="6" height="9"><path d="M1 0.5L5 4.5L1 8.5" stroke="#555" stroke-width="2" fill="none"/></svg>

<!-- GRID -->
<div class="a" style="left:162px;top:129px;width:1078px;height:1px;background:#fff"></div><div class="a" style="left:162px;top:129px;width:1px;height:476px;background:#fff"></div>
<div class="a" style="left:163px;top:130px;width:1077px;height:475px;background:#fff;border:1px solid #7b8290;border-right:none"></div>
<div class="a" style="left:164px;top:131px;width:1076px;height:473px;background:#fff;overflow:hidden">
<div class="a" style="left:1px;top:1px;width:156px;height:204px;background:#e9e9e9;border:1px solid #a9a9a9"></div>
<div class="a" style="left:2px;top:2px;width:154px;height:1px;background:#f4f4f4"></div>
<div class="a" style="left:2px;top:2px;width:1px;height:202px;background:#f4f4f4"></div>
<div class="lb" style="left:2px;top:125px;width:154px;background:#d4d4d4;border-bottom:1px solid #e6e6e6"><span style="transform:translateX(-50%) scaleX(1.035)">01-deflouter-photo.webp</span></div>
<div class="lb" style="left:2px;top:141px;width:154px;background:#d4d4d4;border-bottom:1px solid #e6e6e6"><span style="transform:translateX(-50%) scaleX(0.93)">1287x1014 - 74</span></div>
<div class="lb" style="left:2px;top:157px;width:154px;background:#d4d4d4;border-bottom:1px solid #e6e6e6"><span style="transform:translateX(-50%) scaleX(0.94)">12/16/2022 3:22:19 PM</span></div>
<div class="lb" style="left:2px;top:173px;width:154px;background:#d4d4d4;border-bottom:1px solid #e6e6e6"><span style="transform:translateX(-50%) scaleX(1)"></span></div>
<div class="lb" style="left:2px;top:189px;width:154px;background:#d4d4d4;border-bottom:1px solid #e6e6e6"><span style="transform:translateX(-50%) scaleX(1.035)">mm f/ s iso</span></div>
<div class="th" style="left:15px;top:12px;width:128px;height:102px"><svg style="position:static;display:block;overflow:hidden" width="122" height="96" viewBox="0 0 100 100" preserveAspectRatio="none"><rect x="0" y="0" width="100" height="100" fill="#1c1c1c" /><rect x="0" y="0" width="100" height="7" fill="#141414" /><rect x="6" y="2.5" width="11" height="5" fill="#1d3550" /><rect x="31" y="2" width="10" height="5.5" fill="none" stroke="#d08a10" stroke-width="1.3"/><rect x="1.5" y="8" width="31" height="90" fill="#222426" /><rect x="2" y="10" width="30" height="3" fill="#2e3034" /><rect x="2" y="15" width="30" height="2" fill="#333" /><rect x="4" y="19" width="26" height="9" fill="#2c2c2c" /><rect x="2" y="23" width="30" height="2.5" fill="#4a4a4a" /><rect x="2" y="33" width="28" height="2" fill="#333" /><rect x="2" y="40" width="28" height="2" fill="#333" /><rect x="2" y="47" width="28" height="2" fill="#333" /><rect x="34" y="9" width="65" height="4" fill="#262626" /><rect x="35" y="10" width="2" height="2" fill="#aaa" /><rect x="38" y="10" width="2" height="2" fill="#aaa" /><rect x="41" y="10" width="2" height="2" fill="#888" /><svg x="35" y="27" width="63.5" height="53" viewBox="0 0 100 100" preserveAspectRatio="none"><rect x="0" y="0" width="100" height="100" fill="#8fa860" /><rect x="0" y="0" width="100" height="45" fill="#c8ccaa" /><rect x="0" y="0" width="30" height="40" fill="#a8b888" /><rect x="60" y="0" width="40" height="30" fill="#b0b890" /><rect x="10" y="0" width="6" height="75" fill="#d8d4c8" /><rect x="62" y="5" width="7" height="70" fill="#c8c0b0" /><rect x="82" y="0" width="6" height="72" fill="#bdb4a4" /><rect x="0" y="40" width="100" height="25" fill="#6f8c48" /><rect x="0" y="62" width="100" height="22" fill="#8aa858" /><rect x="0" y="84" width="100" height="16" fill="#a49c8c" /><path d="M38 12L46 10L52 16L56 30L48 40L54 55L52 80L46 80L45 58L38 50L28 70L24 62L34 42L40 24Z" fill="#1e1e24"/></svg><rect x="34" y="95" width="65" height="3" fill="#2a2a2a" /><rect x="61" y="95.5" width="6" height="2" fill="#c02040" /></svg></div>
<div class="a" style="left:156px;top:1px;width:157px;height:204px;background:#e9e9e9;border:1px solid #a9a9a9"></div>
<div class="a" style="left:157px;top:2px;width:155px;height:1px;background:#f4f4f4"></div>
<div class="a" style="left:157px;top:2px;width:1px;height:202px;background:#f4f4f4"></div>
<div class="lb" style="left:157px;top:125px;width:155px;background:#e8dfdd;border-bottom:1px solid #f0e8e7"><span style="transform:translateX(-50%) scaleX(1.035)">01-nettete-mobile.png</span></div>
<div class="lb" style="left:157px;top:141px;width:155px;background:#e8dfdd;border-bottom:1px solid #f0e8e7"><span style="transform:translateX(-50%) scaleX(0.93)">463x960 - 118</span></div>
<div class="lb" style="left:157px;top:157px;width:155px;background:#e8dfdd;border-bottom:1px solid #f0e8e7"><span style="transform:translateX(-50%) scaleX(0.94)">12/16/2022 3:22:19 PM</span></div>
<div class="lb" style="left:157px;top:173px;width:155px;background:#e8dfdd;border-bottom:1px solid #f0e8e7"><span style="transform:translateX(-50%) scaleX(1)"></span></div>
<div class="lb" style="left:157px;top:189px;width:155px;background:#e8dfdd;border-bottom:1px solid #f0e8e7"><span style="transform:translateX(-50%) scaleX(1.035)">mm f/ s iso</span></div>
<div class="th" style="left:208px;top:12px;width:52px;height:102px"><svg style="position:static;display:block;overflow:hidden" width="46" height="96" viewBox="0 0 100 100" preserveAspectRatio="none"><rect x="0" y="0" width="100" height="100" fill="#121414" /><rect x="0" y="0" width="100" height="4" fill="#000" /><rect x="0" y="4" width="100" height="8.5" fill="#0e0e0e" /><rect x="32" y="7.5" width="36" height="2.2" fill="#8a8a8a" /><rect x="75" y="6.5" width="7" height="3.5" fill="#d0a020" /><rect x="86" y="6.5" width="6" height="3.5" fill="#888" /><rect x="0" y="12.5" width="100" height="26" fill="#5a1a1a" /><rect x="0" y="12.5" width="30" height="26" fill="#a81818" /><rect x="60" y="12.5" width="40" height="12" fill="#b02020" /><rect x="30" y="20" width="38" height="18.5" fill="#1d5450" /><rect x="38" y="16" width="22" height="10" fill="#d8b0a0" /><rect x="35" y="14" width="22" height="5" fill="#2a1a1a" /><rect x="20" y="18" width="25" height="4" fill="#e8e8e8" /><rect x="60" y="29" width="30" height="5" fill="#d8c070" /><rect x="66" y="33" width="28" height="4" fill="#2ac0c8" /><rect x="6" y="42.5" width="88" height="9" fill="#2a2a2a" stroke="#d08a10" stroke-width="1.4" vector-effect="non-scaling-stroke"/><rect x="38" y="45.5" width="22" height="3" fill="#9a9a9a" /><rect x="7" y="54" width="26" height="8" fill="#252525" /><rect x="37" y="54" width="26" height="8" fill="#252525" /><rect x="67" y="54" width="26" height="8" fill="#252525" /><rect x="16" y="55.5" width="8" height="3" fill="#ccc" /><rect x="46" y="55.5" width="8" height="3" fill="#ccc" /><rect x="76" y="55.5" width="8" height="3" fill="#ccc" /><rect x="6" y="67.5" width="14" height="1.6" fill="#999" /><rect x="62" y="67.5" width="30" height="1.6" fill="#555" /><rect x="3" y="71" width="30" height="20" fill="#ece4da" stroke="#7a2020" stroke-width="1.2" vector-effect="non-scaling-stroke"/><rect x="35" y="71" width="30" height="20" fill="#eae2d8" stroke="#7a2020" stroke-width="1.2" vector-effect="non-scaling-stroke"/><rect x="67" y="71" width="31" height="20" fill="#e4d4cc" stroke="#7a2020" stroke-width="1.2" vector-effect="non-scaling-stroke"/><rect x="10" y="75" width="14" height="8" fill="#d89040" /><rect x="14" y="80" width="10" height="8" fill="#4a6a8a" /><rect x="42" y="74" width="14" height="7" fill="#5a3a34" /><rect x="45" y="81" width="12" height="7" fill="#8a5a4a" /><rect x="72" y="73" width="22" height="16" fill="#c04038" /><rect x="74" y="73" width="10" height="7" fill="#1a1a1a" /><rect x="4" y="95.5" width="20" height="1.6" fill="#888" /><rect x="70" y="95.5" width="24" height="1.6" fill="#555" /></svg></div>
<div class="a" style="left:312px;top:1px;width:156px;height:204px;background:#e9e9e9;border:1px solid #a9a9a9"></div>
<div class="a" style="left:313px;top:2px;width:154px;height:1px;background:#f4f4f4"></div>
<div class="a" style="left:313px;top:2px;width:1px;height:202px;background:#f4f4f4"></div>
<div class="lb" style="left:313px;top:125px;width:154px;background:#d4d4d4;border-bottom:1px solid #e6e6e6"><span style="transform:translateX(-50%) scaleX(1.035)">01-nettete-mobile.webp</span></div>
<div class="lb" style="left:313px;top:141px;width:154px;background:#d4d4d4;border-bottom:1px solid #e6e6e6"><span style="transform:translateX(-50%) scaleX(0.93)">463x960 - 37</span></div>
<div class="lb" style="left:313px;top:157px;width:154px;background:#d4d4d4;border-bottom:1px solid #e6e6e6"><span style="transform:translateX(-50%) scaleX(0.94)">12/16/2022 3:22:19 PM</span></div>
<div class="lb" style="left:313px;top:173px;width:154px;background:#d4d4d4;border-bottom:1px solid #e6e6e6"><span style="transform:translateX(-50%) scaleX(1)"></span></div>
<div class="lb" style="left:313px;top:189px;width:154px;background:#d4d4d4;border-bottom:1px solid #e6e6e6"><span style="transform:translateX(-50%) scaleX(1.035)">mm f/ s iso</span></div>
<div class="th" style="left:364px;top:12px;width:52px;height:102px"><svg style="position:static;display:block;overflow:hidden" width="46" height="96" viewBox="0 0 100 100" preserveAspectRatio="none"><rect x="0" y="0" width="100" height="100" fill="#121414" /><rect x="0" y="0" width="100" height="4" fill="#000" /><rect x="0" y="4" width="100" height="8.5" fill="#0e0e0e" /><rect x="32" y="7.5" width="36" height="2.2" fill="#8a8a8a" /><rect x="75" y="6.5" width="7" height="3.5" fill="#d0a020" /><rect x="86" y="6.5" width="6" height="3.5" fill="#888" /><rect x="0" y="12.5" width="100" height="26" fill="#5a1a1a" /><rect x="0" y="12.5" width="30" height="26" fill="#a81818" /><rect x="60" y="12.5" width="40" height="12" fill="#b02020" /><rect x="30" y="20" width="38" height="18.5" fill="#1d5450" /><rect x="38" y="16" width="22" height="10" fill="#d8b0a0" /><rect x="35" y="14" width="22" height="5" fill="#2a1a1a" /><rect x="20" y="18" width="25" height="4" fill="#e8e8e8" /><rect x="60" y="29" width="30" height="5" fill="#d8c070" /><rect x="66" y="33" width="28" height="4" fill="#2ac0c8" /><rect x="6" y="42.5" width="88" height="9" fill="#2a2a2a" stroke="#d08a10" stroke-width="1.4" vector-effect="non-scaling-stroke"/><rect x="38" y="45.5" width="22" height="3" fill="#9a9a9a" /><rect x="7" y="54" width="26" height="8" fill="#252525" /><rect x="37" y="54" width="26" height="8" fill="#252525" /><rect x="67" y="54" width="26" height="8" fill="#252525" /><rect x="16" y="55.5" width="8" height="3" fill="#ccc" /><rect x="46" y="55.5" width="8" height="3" fill="#ccc" /><rect x="76" y="55.5" width="8" height="3" fill="#ccc" /><rect x="6" y="67.5" width="14" height="1.6" fill="#999" /><rect x="62" y="67.5" width="30" height="1.6" fill="#555" /><rect x="3" y="71" width="30" height="20" fill="#ece4da" stroke="#7a2020" stroke-width="1.2" vector-effect="non-scaling-stroke"/><rect x="35" y="71" width="30" height="20" fill="#eae2d8" stroke="#7a2020" stroke-width="1.2" vector-effect="non-scaling-stroke"/><rect x="67" y="71" width="31" height="20" fill="#e4d4cc" stroke="#7a2020" stroke-width="1.2" vector-effect="non-scaling-stroke"/><rect x="10" y="75" width="14" height="8" fill="#d89040" /><rect x="14" y="80" width="10" height="8" fill="#4a6a8a" /><rect x="42" y="74" width="14" height="7" fill="#5a3a34" /><rect x="45" y="81" width="12" height="7" fill="#8a5a4a" /><rect x="72" y="73" width="22" height="16" fill="#c04038" /><rect x="74" y="73" width="10" height="7" fill="#1a1a1a" /><rect x="4" y="95.5" width="20" height="1.6" fill="#888" /><rect x="70" y="95.5" width="24" height="1.6" fill="#555" /></svg></div>
<div class="a" style="left:467px;top:1px;width:156px;height:204px;background:#e9e9e9;border:1px solid #a9a9a9"></div>
<div class="a" style="left:468px;top:2px;width:154px;height:1px;background:#f4f4f4"></div>
<div class="a" style="left:468px;top:2px;width:1px;height:202px;background:#f4f4f4"></div>
<div class="lb" style="left:468px;top:125px;width:154px;background:#e8dfdd;border-bottom:1px solid #f0e8e7"><span style="transform:translateX(-50%) scaleX(1.035)">01-reduction-bruit-photo.png</span></div>
<div class="lb" style="left:468px;top:141px;width:154px;background:#e8dfdd;border-bottom:1px solid #f0e8e7"><span style="transform:translateX(-50%) scaleX(0.93)">1311x1035 - 385</span></div>
<div class="lb" style="left:468px;top:157px;width:154px;background:#e8dfdd;border-bottom:1px solid #f0e8e7"><span style="transform:translateX(-50%) scaleX(0.94)">12/16/2022 3:22:19 PM</span></div>
<div class="lb" style="left:468px;top:173px;width:154px;background:#e8dfdd;border-bottom:1px solid #f0e8e7"><span style="transform:translateX(-50%) scaleX(1)"></span></div>
<div class="lb" style="left:468px;top:189px;width:154px;background:#e8dfdd;border-bottom:1px solid #f0e8e7"><span style="transform:translateX(-50%) scaleX(1.035)">mm f/ s iso</span></div>
<div class="th" style="left:481px;top:12px;width:128px;height:102px"><svg style="position:static;display:block;overflow:hidden" width="122" height="96" viewBox="0 0 100 100" preserveAspectRatio="none"><rect x="0" y="0" width="100" height="100" fill="#1c1c1c" /><rect x="0" y="0" width="100" height="7" fill="#141414" /><rect x="6" y="2.5" width="11" height="5" fill="#1d3550" /><rect x="31" y="2" width="10" height="5.5" fill="none" stroke="#d08a10" stroke-width="1.3"/><rect x="1.5" y="8" width="31" height="90" fill="#222426" /><rect x="2" y="10" width="30" height="3" fill="#2e3034" /><rect x="2" y="15" width="30" height="2" fill="#333" /><rect x="4" y="19" width="26" height="9" fill="#2c2c2c" /><rect x="2" y="23" width="30" height="2.5" fill="#4a4a4a" /><rect x="2" y="33" width="28" height="2" fill="#333" /><rect x="2" y="40" width="28" height="2" fill="#333" /><rect x="2" y="47" width="28" height="2" fill="#333" /><rect x="34" y="9" width="65" height="4" fill="#262626" /><rect x="35" y="10" width="2" height="2" fill="#aaa" /><rect x="38" y="10" width="2" height="2" fill="#aaa" /><rect x="41" y="10" width="2" height="2" fill="#888" /><svg x="35" y="15.6" width="62.6" height="76" viewBox="0 0 100 100" preserveAspectRatio="none"><rect x="0" y="0" width="100" height="100" fill="#6e5038" /><rect x="0" y="0" width="100" height="40" fill="#8a6a48" /><rect x="40" y="0" width="60" height="20" fill="#a08058" /><rect x="0" y="60" width="100" height="40" fill="#5a4030" /><rect x="6" y="4" width="24" height="22" fill="#d0dce2" /><rect x="8" y="8" width="20" height="3" fill="#8ab0c8" /><rect x="60" y="8" width="12" height="14" fill="#c8a070" /><rect x="82" y="4" width="14" height="20" fill="#b89060" /><rect x="0" y="30" width="10" height="40" fill="#3a2a20" /><rect x="88" y="30" width="12" height="30" fill="#4a3a28" /><rect x="16" y="58" width="9" height="42" fill="#ece8e0" /><rect x="26" y="34" width="10" height="30" fill="#4a64b8" /><rect x="27" y="62" width="9" height="38" fill="#2a2424" /><rect x="30" y="20" width="8" height="12" fill="#2a1a14" /><rect x="46" y="38" width="10" height="62" fill="#e8e4da" /><rect x="55" y="40" width="10" height="22" fill="#e8c030" /><rect x="56" y="60" width="10" height="40" fill="#3a4a8a" /><rect x="50" y="20" width="14" height="18" fill="#1e140e" /><rect x="72" y="46" width="22" height="22" fill="#c04840" /><rect x="74" y="66" width="16" height="34" fill="#8a7a68" /><rect x="76" y="4" width="3" height="60" fill="#e0dcd4" /><rect x="0" y="86" width="100" height="14" fill="#6a5a48" /></svg><rect x="34" y="95" width="65" height="3" fill="#2a2a2a" /><rect x="61" y="95.5" width="6" height="2" fill="#c02040" /></svg></div>
<div class="a" style="left:622px;top:1px;width:156px;height:204px;background:#e9e9e9;border:1px solid #a9a9a9"></div>
<div class="a" style="left:623px;top:2px;width:154px;height:1px;background:#f4f4f4"></div>
<div class="a" style="left:623px;top:2px;width:1px;height:202px;background:#f4f4f4"></div>
<div class="lb" style="left:623px;top:125px;width:154px;background:#d4d4d4;border-bottom:1px solid #e6e6e6"><span style="transform:translateX(-50%) scaleX(1.035)">01-reduction-bruit-photo.webp</span></div>
<div class="lb" style="left:623px;top:141px;width:154px;background:#d4d4d4;border-bottom:1px solid #e6e6e6"><span style="transform:translateX(-50%) scaleX(0.93)">1311x1035 - 96</span></div>
<div class="lb" style="left:623px;top:157px;width:154px;background:#d4d4d4;border-bottom:1px solid #e6e6e6"><span style="transform:translateX(-50%) scaleX(0.94)">12/16/2022 3:22:19 PM</span></div>
<div class="lb" style="left:623px;top:173px;width:154px;background:#d4d4d4;border-bottom:1px solid #e6e6e6"><span style="transform:translateX(-50%) scaleX(1)"></span></div>
<div class="lb" style="left:623px;top:189px;width:154px;background:#d4d4d4;border-bottom:1px solid #e6e6e6"><span style="transform:translateX(-50%) scaleX(1.035)">mm f/ s iso</span></div>
<div class="th" style="left:636px;top:12px;width:128px;height:102px"><svg style="position:static;display:block;overflow:hidden" width="122" height="96" viewBox="0 0 100 100" preserveAspectRatio="none"><rect x="0" y="0" width="100" height="100" fill="#1c1c1c" /><rect x="0" y="0" width="100" height="7" fill="#141414" /><rect x="6" y="2.5" width="11" height="5" fill="#1d3550" /><rect x="31" y="2" width="10" height="5.5" fill="none" stroke="#d08a10" stroke-width="1.3"/><rect x="1.5" y="8" width="31" height="90" fill="#222426" /><rect x="2" y="10" width="30" height="3" fill="#2e3034" /><rect x="2" y="15" width="30" height="2" fill="#333" /><rect x="4" y="19" width="26" height="9" fill="#2c2c2c" /><rect x="2" y="23" width="30" height="2.5" fill="#4a4a4a" /><rect x="2" y="33" width="28" height="2" fill="#333" /><rect x="2" y="40" width="28" height="2" fill="#333" /><rect x="2" y="47" width="28" height="2" fill="#333" /><rect x="34" y="9" width="65" height="4" fill="#262626" /><rect x="35" y="10" width="2" height="2" fill="#aaa" /><rect x="38" y="10" width="2" height="2" fill="#aaa" /><rect x="41" y="10" width="2" height="2" fill="#888" /><svg x="35" y="15.6" width="62.6" height="76" viewBox="0 0 100 100" preserveAspectRatio="none"><rect x="0" y="0" width="100" height="100" fill="#6e5038" /><rect x="0" y="0" width="100" height="40" fill="#8a6a48" /><rect x="40" y="0" width="60" height="20" fill="#a08058" /><rect x="0" y="60" width="100" height="40" fill="#5a4030" /><rect x="6" y="4" width="24" height="22" fill="#d0dce2" /><rect x="8" y="8" width="20" height="3" fill="#8ab0c8" /><rect x="60" y="8" width="12" height="14" fill="#c8a070" /><rect x="82" y="4" width="14" height="20" fill="#b89060" /><rect x="0" y="30" width="10" height="40" fill="#3a2a20" /><rect x="88" y="30" width="12" height="30" fill="#4a3a28" /><rect x="16" y="58" width="9" height="42" fill="#ece8e0" /><rect x="26" y="34" width="10" height="30" fill="#4a64b8" /><rect x="27" y="62" width="9" height="38" fill="#2a2424" /><rect x="30" y="20" width="8" height="12" fill="#2a1a14" /><rect x="46" y="38" width="10" height="62" fill="#e8e4da" /><rect x="55" y="40" width="10" height="22" fill="#e8c030" /><rect x="56" y="60" width="10" height="40" fill="#3a4a8a" /><rect x="50" y="20" width="14" height="18" fill="#1e140e" /><rect x="72" y="46" width="22" height="22" fill="#c04840" /><rect x="74" y="66" width="16" height="34" fill="#8a7a68" /><rect x="76" y="4" width="3" height="60" fill="#e0dcd4" /><rect x="0" y="86" width="100" height="14" fill="#6a5a48" /></svg><rect x="34" y="95" width="65" height="3" fill="#2a2a2a" /><rect x="61" y="95.5" width="6" height="2" fill="#c02040" /></svg></div>
<div class="a" style="left:777px;top:1px;width:156px;height:204px;background:#e9e9e9;border:1px solid #a9a9a9"></div>
<div class="a" style="left:778px;top:2px;width:154px;height:1px;background:#f4f4f4"></div>
<div class="a" style="left:778px;top:2px;width:1px;height:202px;background:#f4f4f4"></div>
<div class="lb" style="left:778px;top:125px;width:154px;background:#e8dfdd;border-bottom:1px solid #f0e8e7"><span style="transform:translateX(-50%) scaleX(1.035)">01-reduire-bruit-photo.png</span></div>
<div class="lb" style="left:778px;top:141px;width:154px;background:#e8dfdd;border-bottom:1px solid #f0e8e7"><span style="transform:translateX(-50%) scaleX(0.93)">463x963 - 122</span></div>
<div class="lb" style="left:778px;top:157px;width:154px;background:#e8dfdd;border-bottom:1px solid #f0e8e7"><span style="transform:translateX(-50%) scaleX(0.94)">12/16/2022 3:22:19 PM</span></div>
<div class="lb" style="left:778px;top:173px;width:154px;background:#e8dfdd;border-bottom:1px solid #f0e8e7"><span style="transform:translateX(-50%) scaleX(1)"></span></div>
<div class="lb" style="left:778px;top:189px;width:154px;background:#e8dfdd;border-bottom:1px solid #f0e8e7"><span style="transform:translateX(-50%) scaleX(1.035)">mm f/ s iso</span></div>
<div class="th" style="left:829px;top:12px;width:52px;height:102px"><svg style="position:static;display:block;overflow:hidden" width="46" height="96" viewBox="0 0 100 100" preserveAspectRatio="none"><rect x="0" y="0" width="100" height="100" fill="#121414" /><rect x="0" y="0" width="100" height="4" fill="#000" /><rect x="0" y="4" width="100" height="8.5" fill="#0e0e0e" /><rect x="32" y="7.5" width="36" height="2.2" fill="#8a8a8a" /><rect x="75" y="6.5" width="7" height="3.5" fill="#d0a020" /><rect x="86" y="6.5" width="6" height="3.5" fill="#888" /><rect x="0" y="12.5" width="100" height="26" fill="#2a5a7a" /><rect x="0" y="12.5" width="10" height="26" fill="#c04030" /><rect x="62" y="16" width="30" height="22" fill="#1a2a38" /><rect x="38" y="14" width="24" height="10" fill="#e8c8b8" /><rect x="32" y="22" width="36" height="16" fill="#e8e8e8" /><rect x="28" y="28" width="12" height="10" fill="#c83828" /><rect x="62" y="28" width="10" height="10" fill="#c83828" /><rect x="8" y="33" width="30" height="3" fill="#aaa" /><rect x="64" y="32" width="28" height="5" fill="#2ac0c8" /><rect x="6" y="42.5" width="88" height="9" fill="#2a2a2a" stroke="#d08a10" stroke-width="1.4" vector-effect="non-scaling-stroke"/><rect x="38" y="45.5" width="22" height="3" fill="#9a9a9a" /><rect x="7" y="54" width="26" height="8" fill="#252525" /><rect x="37" y="54" width="26" height="8" fill="#252525" /><rect x="67" y="54" width="26" height="8" fill="#252525" /><rect x="16" y="55.5" width="8" height="3" fill="#ccc" /><rect x="46" y="55.5" width="8" height="3" fill="#ccc" /><rect x="76" y="55.5" width="8" height="3" fill="#ccc" /><rect x="6" y="67.5" width="14" height="1.6" fill="#999" /><rect x="62" y="67.5" width="30" height="1.6" fill="#555" /><rect x="3" y="71" width="30" height="20" fill="#ece4da" stroke="#7a2020" stroke-width="1.2" vector-effect="non-scaling-stroke"/><rect x="35" y="71" width="30" height="20" fill="#eae2d8" stroke="#7a2020" stroke-width="1.2" vector-effect="non-scaling-stroke"/><rect x="67" y="71" width="31" height="20" fill="#e4d4cc" stroke="#7a2020" stroke-width="1.2" vector-effect="non-scaling-stroke"/><rect x="10" y="75" width="14" height="8" fill="#d89040" /><rect x="14" y="80" width="10" height="8" fill="#4a6a8a" /><rect x="42" y="74" width="14" height="7" fill="#5a3a34" /><rect x="45" y="81" width="12" height="7" fill="#8a5a4a" /><rect x="72" y="73" width="22" height="16" fill="#c04038" /><rect x="74" y="73" width="10" height="7" fill="#1a1a1a" /><rect x="4" y="95.5" width="20" height="1.6" fill="#888" /><rect x="70" y="95.5" width="24" height="1.6" fill="#555" /></svg></div>
<div class="a" style="left:1px;top:204px;width:156px;height:204px;background:#e9e9e9;border:1px solid #a9a9a9"></div>
<div class="a" style="left:2px;top:205px;width:154px;height:1px;background:#f4f4f4"></div>
<div class="a" style="left:2px;top:205px;width:1px;height:202px;background:#f4f4f4"></div>
<div class="lb" style="left:2px;top:328px;width:154px;background:#d4d4d4;border-bottom:1px solid #e6e6e6"><span style="transform:translateX(-50%) scaleX(1.035)">01-reduire-bruit-photo.webp</span></div>
<div class="lb" style="left:2px;top:344px;width:154px;background:#d4d4d4;border-bottom:1px solid #e6e6e6"><span style="transform:translateX(-50%) scaleX(0.93)">463x963 - 39</span></div>
<div class="lb" style="left:2px;top:360px;width:154px;background:#d4d4d4;border-bottom:1px solid #e6e6e6"><span style="transform:translateX(-50%) scaleX(0.94)">12/16/2022 3:22:19 PM</span></div>
<div class="lb" style="left:2px;top:376px;width:154px;background:#d4d4d4;border-bottom:1px solid #e6e6e6"><span style="transform:translateX(-50%) scaleX(1)"></span></div>
<div class="lb" style="left:2px;top:392px;width:154px;background:#d4d4d4;border-bottom:1px solid #e6e6e6"><span style="transform:translateX(-50%) scaleX(1.035)">mm f/ s iso</span></div>
<div class="th" style="left:53px;top:215px;width:52px;height:102px"><svg style="position:static;display:block;overflow:hidden" width="46" height="96" viewBox="0 0 100 100" preserveAspectRatio="none"><rect x="0" y="0" width="100" height="100" fill="#121414" /><rect x="0" y="0" width="100" height="4" fill="#000" /><rect x="0" y="4" width="100" height="8.5" fill="#0e0e0e" /><rect x="32" y="7.5" width="36" height="2.2" fill="#8a8a8a" /><rect x="75" y="6.5" width="7" height="3.5" fill="#d0a020" /><rect x="86" y="6.5" width="6" height="3.5" fill="#888" /><rect x="0" y="12.5" width="100" height="26" fill="#2a5a7a" /><rect x="0" y="12.5" width="10" height="26" fill="#c04030" /><rect x="62" y="16" width="30" height="22" fill="#1a2a38" /><rect x="38" y="14" width="24" height="10" fill="#e8c8b8" /><rect x="32" y="22" width="36" height="16" fill="#e8e8e8" /><rect x="28" y="28" width="12" height="10" fill="#c83828" /><rect x="62" y="28" width="10" height="10" fill="#c83828" /><rect x="8" y="33" width="30" height="3" fill="#aaa" /><rect x="64" y="32" width="28" height="5" fill="#2ac0c8" /><rect x="6" y="42.5" width="88" height="9" fill="#2a2a2a" stroke="#d08a10" stroke-width="1.4" vector-effect="non-scaling-stroke"/><rect x="38" y="45.5" width="22" height="3" fill="#9a9a9a" /><rect x="7" y="54" width="26" height="8" fill="#252525" /><rect x="37" y="54" width="26" height="8" fill="#252525" /><rect x="67" y="54" width="26" height="8" fill="#252525" /><rect x="16" y="55.5" width="8" height="3" fill="#ccc" /><rect x="46" y="55.5" width="8" height="3" fill="#ccc" /><rect x="76" y="55.5" width="8" height="3" fill="#ccc" /><rect x="6" y="67.5" width="14" height="1.6" fill="#999" /><rect x="62" y="67.5" width="30" height="1.6" fill="#555" /><rect x="3" y="71" width="30" height="20" fill="#ece4da" stroke="#7a2020" stroke-width="1.2" vector-effect="non-scaling-stroke"/><rect x="35" y="71" width="30" height="20" fill="#eae2d8" stroke="#7a2020" stroke-width="1.2" vector-effect="non-scaling-stroke"/><rect x="67" y="71" width="31" height="20" fill="#e4d4cc" stroke="#7a2020" stroke-width="1.2" vector-effect="non-scaling-stroke"/><rect x="10" y="75" width="14" height="8" fill="#d89040" /><rect x="14" y="80" width="10" height="8" fill="#4a6a8a" /><rect x="42" y="74" width="14" height="7" fill="#5a3a34" /><rect x="45" y="81" width="12" height="7" fill="#8a5a4a" /><rect x="72" y="73" width="22" height="16" fill="#c04038" /><rect x="74" y="73" width="10" height="7" fill="#1a1a1a" /><rect x="4" y="95.5" width="20" height="1.6" fill="#888" /><rect x="70" y="95.5" width="24" height="1.6" fill="#555" /></svg></div>
<div class="a" style="left:156px;top:204px;width:157px;height:204px;background:#e9e9e9;border:1px solid #a9a9a9"></div>
<div class="a" style="left:157px;top:205px;width:155px;height:1px;background:#f4f4f4"></div>
<div class="a" style="left:157px;top:205px;width:1px;height:202px;background:#f4f4f4"></div>
<div class="lb" style="left:157px;top:328px;width:155px;background:#e8dfdd;border-bottom:1px solid #f0e8e7"><span style="transform:translateX(-50%) scaleX(1.035)">1-.1-removebg-preview.png</span></div>
<div class="lb" style="left:157px;top:344px;width:155px;background:#e8dfdd;border-bottom:1px solid #f0e8e7"><span style="transform:translateX(-50%) scaleX(0.93)">335x745 - 369</span></div>
<div class="lb" style="left:157px;top:360px;width:155px;background:#e8dfdd;border-bottom:1px solid #f0e8e7"><span style="transform:translateX(-50%) scaleX(0.94)">12/16/2022 3:22:20 PM</span></div>
<div class="lb" style="left:157px;top:376px;width:155px;background:#e8dfdd;border-bottom:1px solid #f0e8e7"><span style="transform:translateX(-50%) scaleX(1)"></span></div>
<div class="lb" style="left:157px;top:392px;width:155px;background:#e8dfdd;border-bottom:1px solid #f0e8e7"><span style="transform:translateX(-50%) scaleX(1.035)">mm f/ s iso</span></div>
<div class="th tr" style="left:209px;top:215px;width:50px;height:102px"><svg style="position:static;display:block;overflow:hidden" width="44" height="96" viewBox="0 0 100 100" preserveAspectRatio="none"><rect x="0" y="0" width="100" height="100" fill="#e9e9e9" /><rect x="5" y="11.5" width="41" height="26" fill="#3a1a14" /><rect x="8" y="13" width="35" height="23" fill="#c03020" /><rect x="16" y="15" width="18" height="16" fill="#1e2a48" /><rect x="12" y="30" width="26" height="5" fill="#e8e0e0" /><rect x="38" y="32" width="6" height="4" fill="#30c080" /><rect x="52" y="11.5" width="40" height="26" fill="#101010" /><rect x="55" y="14" width="34" height="20" fill="#6a4a30" /><rect x="64" y="18" width="16" height="10" fill="#b08050" /><rect x="84" y="32" width="6" height="4" fill="#30c080" /><rect x="5" y="39.5" width="41" height="26" fill="#201e20" /><rect x="8" y="41" width="35" height="10" fill="#7a7a80" /><rect x="20" y="42" width="12" height="8" fill="#2a2a30" /><rect x="8" y="54" width="35" height="10" fill="#3a3a44" /><rect x="38" y="60" width="6" height="4" fill="#30c080" /><rect x="52" y="39.5" width="40" height="26" fill="#3a2010" /><rect x="54" y="41" width="16" height="10" fill="#c06a30" /><rect x="72" y="42" width="18" height="10" fill="#8a5030" /><rect x="56" y="54" width="34" height="10" fill="#b06030" /><rect x="84" y="60" width="6" height="4" fill="#30c080" /><rect x="5" y="67.5" width="41" height="26" fill="#181818" /><rect x="8" y="70" width="14" height="8" fill="#3a80a8" /><rect x="24" y="70" width="18" height="10" fill="#a06a40" /><rect x="10" y="82" width="14" height="10" fill="#2a6080" /><rect x="38" y="88" width="6" height="4" fill="#30c080" /><rect x="52" y="67.5" width="40" height="26" fill="#3a2818" /><rect x="54" y="70" width="18" height="10" fill="#c07a40" /><rect x="72" y="74" width="16" height="10" fill="#8a5030" /><rect x="56" y="84" width="30" height="8" fill="#9a6030" /><rect x="84" y="88" width="6" height="4" fill="#30c080" /></svg></div>
<svg style="left:289px;top:308px" width="13" height="13" viewBox="0 0 13 13"><rect x="0" y="0" width="13" height="13" rx="1.5" fill="#fff"/><rect x="1" y="1" width="11" height="11" fill="#5a5a98"/><circle cx="6" cy="4.6" r="2.1" fill="none" stroke="#fff" stroke-width="1"/><circle cx="4.4" cy="7.6" r="2.1" fill="none" stroke="#fff" stroke-width="1"/><circle cx="8" cy="7.6" r="2.1" fill="none" stroke="#fff" stroke-width="1"/></svg>
<div class="a" style="left:312px;top:204px;width:156px;height:204px;background:#e9e9e9;border:1px solid #a9a9a9"></div>
<div class="a" style="left:313px;top:205px;width:154px;height:1px;background:#f4f4f4"></div>
<div class="a" style="left:313px;top:205px;width:1px;height:202px;background:#f4f4f4"></div>
<div class="lb" style="left:313px;top:328px;width:154px;background:#ecebc8;border-bottom:1px solid #f4f3dc"><span style="transform:translateX(-50%) scaleX(1.035)">1.jpg</span></div>
<div class="lb" style="left:313px;top:344px;width:154px;background:#ecebc8;border-bottom:1px solid #f4f3dc"><span style="transform:translateX(-50%) scaleX(0.93)">490x1088 - 80</span></div>
<div class="lb" style="left:313px;top:360px;width:154px;background:#ecebc8;border-bottom:1px solid #f4f3dc"><span style="transform:translateX(-50%) scaleX(0.94)">12/16/2022 3:22:20 PM</span></div>
<div class="lb" style="left:313px;top:376px;width:154px;background:#ecebc8;border-bottom:1px solid #f4f3dc"><span style="transform:translateX(-50%) scaleX(1)"></span></div>
<div class="lb" style="left:313px;top:392px;width:154px;background:#ecebc8;border-bottom:1px solid #f4f3dc"><span style="transform:translateX(-50%) scaleX(1.035)">mm f/ s iso</span></div>
<div class="th" style="left:365px;top:215px;width:49px;height:102px"><svg style="position:static;display:block;overflow:hidden" width="43" height="96" viewBox="0 0 100 100" preserveAspectRatio="none"><rect x="0" y="0" width="100" height="100" fill="#1e2422" /><rect x="0" y="0" width="100" height="9" fill="#0a0c0c" /><rect x="0" y="27" width="100" height="30" fill="#6ab8d8" /><rect x="0" y="44" width="100" height="13" fill="#e8e4dc" /><rect x="0" y="27" width="100" height="8" fill="#4aa8d0" /><path d="M25 38Q40 26 62 34L62 40L45 42Z" fill="#d0a060"/><rect x="32" y="38" width="28" height="18" fill="#d89a78" /><rect x="48" y="40" width="22" height="17" fill="#c0703a" /><rect x="30" y="50" width="12" height="7" fill="#a8c8e0" /><rect x="0" y="75" width="100" height="10" fill="#1a1e1e" /><rect x="2" y="76" width="19" height="9" fill="#c08a70" /><rect x="23" y="76" width="19" height="9" fill="#7a5a50" /><rect x="44" y="76" width="19" height="9" fill="#d0a090" /><rect x="65" y="76" width="19" height="9" fill="#c89070" /><rect x="86" y="76" width="14" height="9" fill="#6a5a60" /><rect x="0" y="85" width="100" height="6" fill="#161a1a" /><rect x="0" y="91" width="100" height="9" fill="#f0f0f0" /></svg></div>
<div class="a" style="left:467px;top:204px;width:156px;height:204px;background:#e9e9e9;border:1px solid #a9a9a9"></div>
<div class="a" style="left:468px;top:205px;width:154px;height:1px;background:#f4f4f4"></div>
<div class="a" style="left:468px;top:205px;width:1px;height:202px;background:#f4f4f4"></div>
<div class="lb" style="left:468px;top:328px;width:154px;background:#e8dfdd;border-bottom:1px solid #f0e8e7"><span style="transform:translateX(-50%) scaleX(1.035)">1.png</span></div>
<div class="lb" style="left:468px;top:344px;width:154px;background:#e8dfdd;border-bottom:1px solid #f0e8e7"><span style="transform:translateX(-50%) scaleX(0.93)">1006x854 - 798</span></div>
<div class="lb" style="left:468px;top:360px;width:154px;background:#e8dfdd;border-bottom:1px solid #f0e8e7"><span style="transform:translateX(-50%) scaleX(0.94)">11/6/2023 1:39:21 PM</span></div>
<div class="lb" style="left:468px;top:376px;width:154px;background:#e8dfdd;border-bottom:1px solid #f0e8e7"><span style="transform:translateX(-50%) scaleX(1)"></span></div>
<div class="lb" style="left:468px;top:392px;width:154px;background:#e8dfdd;border-bottom:1px solid #f0e8e7"><span style="transform:translateX(-50%) scaleX(1.035)">mm f/ s iso</span></div>
<div class="th" style="left:485px;top:215px;width:119px;height:102px"><svg style="position:static;display:block;overflow:hidden" width="113" height="96" viewBox="0 0 100 100" preserveAspectRatio="none"><rect x="0" y="0" width="100" height="100" fill="#282828" /><rect x="0" y="0" width="100" height="6" fill="#161616" /><rect x="83" y="1.5" width="14" height="3.5" fill="#606060" /><rect x="97" y="1.5" width="3" height="3.5" fill="#8a40d0" /><rect x="4" y="13" width="48" height="2" fill="#888" /><rect x="4" y="20" width="48" height="12" fill="#1e1e1e" /><rect x="6" y="23" width="30" height="1.5" fill="#aaa" /><rect x="6" y="27" width="30" height="1.5" fill="#aaa" /><rect x="10" y="35" width="12" height="1.2" fill="#1aa7e8" /><rect x="4" y="37" width="11" height="12" fill="#232323" /><rect x="15.5" y="37" width="10.8" height="12" fill="#a07850" /><rect x="27" y="37" width="11" height="12" fill="#c08050" /><rect x="4" y="53" width="11" height="11" fill="#e0b8a0" /><rect x="15.5" y="53" width="10.8" height="11" fill="#5a4a6a" /><rect x="27" y="53" width="11" height="11" fill="#a07040" /><rect x="4" y="69" width="11" height="11" fill="#6a5a30" /><rect x="15.5" y="69" width="10.8" height="11" fill="#4a3a2a" /><rect x="27" y="69" width="11" height="11" fill="#c0c8c0" /><rect x="4" y="84" width="11" height="6" fill="#d8d8d8" /><rect x="15.5" y="84" width="10.8" height="6" fill="#e0e0e0" /><rect x="27" y="84" width="11" height="6" fill="#b09060" /><rect x="4" y="92" width="37" height="3.5" fill="#1aa7e8" /><rect x="45" y="15" width="50" height="79" fill="#1c1c1c" /><rect x="48" y="22" width="44" height="51" fill="#e84030" /><rect x="66" y="22" width="26" height="30" fill="#f0b030" /><rect x="80" y="40" width="12" height="24" fill="#e8308a" /><path d="M58 28Q64 20 78 26L80 36L70 40L58 36Z" fill="#c8a050"/><rect x="58" y="36" width="20" height="36" fill="#a0603a" /><rect x="52" y="50" width="16" height="22" fill="#3a5aa0" /><rect x="62" y="58" width="26" height="15" fill="#d07020" /><rect x="48" y="62" width="12" height="11" fill="#f0f0f0" /><rect x="46" y="81" width="48" height="7" fill="#402a20" /><rect x="47" y="82" width="6" height="5" fill="#c05030" /><rect x="54" y="82" width="6" height="5" fill="#d09030" /><rect x="61" y="82" width="6" height="5" fill="#c06040" /><rect x="68" y="82" width="6" height="5" fill="#e0a040" /><rect x="75" y="82" width="6" height="5" fill="#c05030" /><rect x="82" y="82" width="6" height="5" fill="#d08040" /></svg></div>
<div class="a" style="left:622px;top:204px;width:156px;height:204px;background:#e9e9e9;border:1px solid #a9a9a9"></div>
<div class="a" style="left:623px;top:205px;width:154px;height:1px;background:#f4f4f4"></div>
<div class="a" style="left:623px;top:205px;width:1px;height:202px;background:#f4f4f4"></div>
<div class="lb" style="left:623px;top:328px;width:154px;background:#e8dfdd;border-bottom:1px solid #f0e8e7"><span style="transform:translateX(-50%) scaleX(1.035)">1-1-removebg-preview.png</span></div>
<div class="lb" style="left:623px;top:344px;width:154px;background:#e8dfdd;border-bottom:1px solid #f0e8e7"><span style="transform:translateX(-50%) scaleX(0.93)">500x500 - 34</span></div>
<div class="lb" style="left:623px;top:360px;width:154px;background:#e8dfdd;border-bottom:1px solid #f0e8e7"><span style="transform:translateX(-50%) scaleX(0.94)">12/16/2022 3:22:20 PM</span></div>
<div class="lb" style="left:623px;top:376px;width:154px;background:#e8dfdd;border-bottom:1px solid #f0e8e7"><span style="transform:translateX(-50%) scaleX(1)"></span></div>
<div class="lb" style="left:623px;top:392px;width:154px;background:#e8dfdd;border-bottom:1px solid #f0e8e7"><span style="transform:translateX(-50%) scaleX(1.035)">mm f/ s iso</span></div>
<div class="th tr" style="left:649px;top:215px;width:102px;height:102px"><svg style="position:static;display:block;overflow:hidden" width="96" height="96" viewBox="0 0 100 100" preserveAspectRatio="none"><rect x="0" y="0" width="100" height="100" fill="#e9e9e9" /><g transform="translate(6.5 3.5)"><path d="M58 46Q60 43 62 46L62 50L66 52L67 62L65 64L65 72L62 80L60 80L59 72L57 72L56 80L53 80L54 70L53 62L50 60L51 52L55 50Z" fill="#9a5a34"/><rect x="49" y="55" width="4" height="10" fill="#f0c030" /><rect x="54" y="54" width="10" height="12" fill="#d8c8a8" /><rect x="54" y="65" width="10" height="6" fill="#2a6a7a" /></g></svg></div>
<svg style="left:755px;top:308px" width="13" height="13" viewBox="0 0 13 13"><rect x="0" y="0" width="13" height="13" rx="1.5" fill="#fff"/><rect x="1" y="1" width="11" height="11" fill="#5a5a98"/><circle cx="6" cy="4.6" r="2.1" fill="none" stroke="#fff" stroke-width="1"/><circle cx="4.4" cy="7.6" r="2.1" fill="none" stroke="#fff" stroke-width="1"/><circle cx="8" cy="7.6" r="2.1" fill="none" stroke="#fff" stroke-width="1"/></svg>
<div class="a" style="left:777px;top:204px;width:156px;height:204px;background:#e9e9e9;border:1px solid #a9a9a9"></div>
<div class="a" style="left:778px;top:205px;width:154px;height:1px;background:#f4f4f4"></div>
<div class="a" style="left:778px;top:205px;width:1px;height:202px;background:#f4f4f4"></div>
<div class="lb" style="left:778px;top:328px;width:154px;background:#e8dfdd;border-bottom:1px solid #f0e8e7"><span style="transform:translateX(-50%) scaleX(1.035)">1D.png</span></div>
<div class="lb" style="left:778px;top:344px;width:154px;background:#e8dfdd;border-bottom:1px solid #f0e8e7"><span style="transform:translateX(-50%) scaleX(0.93)">506x1015 - 199</span></div>
<div class="lb" style="left:778px;top:360px;width:154px;background:#e8dfdd;border-bottom:1px solid #f0e8e7"><span style="transform:translateX(-50%) scaleX(0.94)">3/22/2023 10:00:30 AM</span></div>
<div class="lb" style="left:778px;top:376px;width:154px;background:#e8dfdd;border-bottom:1px solid #f0e8e7"><span style="transform:translateX(-50%) scaleX(1)"></span></div>
<div class="lb" style="left:778px;top:392px;width:154px;background:#e8dfdd;border-bottom:1px solid #f0e8e7"><span style="transform:translateX(-50%) scaleX(1.035)">mm f/ s iso</span></div>
<div class="th" style="left:828px;top:215px;width:54px;height:102px"><svg style="position:static;display:block;overflow:hidden" width="48" height="96" viewBox="0 0 100 100" preserveAspectRatio="none"><rect x="0" y="0" width="100" height="100" fill="#141a1a" /><rect x="0" y="0" width="100" height="6" fill="#050808" /><rect x="0" y="6" width="100" height="4" fill="#1e2828" /><rect x="0" y="10" width="100" height="63" fill="#8a8482" /><ellipse cx="56" cy="44" rx="44" ry="27" fill="#b08a6e"/><ellipse cx="22" cy="22" rx="24" ry="14" fill="#f2eeee"/><ellipse cx="10" cy="38" rx="12" ry="10" fill="#eeeaea"/><ellipse cx="62" cy="14" rx="36" ry="6" fill="#f4f0f0"/><ellipse cx="92" cy="20" rx="10" ry="7" fill="#eee8e8"/><rect x="16" y="14" width="4" height="3" fill="#d84080" /><rect x="70" y="12" width="4" height="3" fill="#d84080" /><rect x="48" y="16" width="4" height="3" fill="#d84080" /><ellipse cx="51" cy="42" rx="21" ry="19" fill="#e4c4b2"/><rect x="37" y="38" width="10" height="3" fill="#5a5868" /><rect x="57" y="38" width="10" height="3" fill="#5a5868" /><rect x="44" y="52" width="14" height="3.5" fill="#c08888" /><path d="M0 73L0 66Q20 58 50 62Q80 58 100 66L100 73Z" fill="#f0eeea"/><rect x="0" y="73" width="100" height="9" fill="#1e2828" /><rect x="1" y="82" width="16" height="13" fill="#c09070" /><rect x="21" y="82" width="16" height="13" fill="#e0d0d0" /><rect x="41" y="82" width="16" height="13" fill="#e0c0b0" /><rect x="61" y="82" width="16" height="13" fill="#4a4050" /><rect x="81" y="82" width="19" height="13" fill="#c09070" /><rect x="0" y="95" width="100" height="5" fill="#0a0e0e" /></svg></div>
<div class="a" style="left:1px;top:407px;width:156px;height:204px;background:#e9e9e9;border:1px solid #a9a9a9"></div>
<div class="a" style="left:2px;top:408px;width:154px;height:1px;background:#f4f4f4"></div>
<div class="a" style="left:2px;top:408px;width:1px;height:202px;background:#f4f4f4"></div>
<div class="lb" style="left:2px;top:531px;width:154px;background:#d4d4d4;border-bottom:1px solid #e6e6e6"><span style="transform:translateX(-50%) scaleX(1.035)"></span></div>
<div class="lb" style="left:2px;top:547px;width:154px;background:#d4d4d4;border-bottom:1px solid #e6e6e6"><span style="transform:translateX(-50%) scaleX(0.93)"></span></div>
<div class="lb" style="left:2px;top:563px;width:154px;background:#d4d4d4;border-bottom:1px solid #e6e6e6"><span style="transform:translateX(-50%) scaleX(0.94)"></span></div>
<div class="lb" style="left:2px;top:579px;width:154px;background:#d4d4d4;border-bottom:1px solid #e6e6e6"><span style="transform:translateX(-50%) scaleX(1)"></span></div>
<div class="lb" style="left:2px;top:595px;width:154px;background:#d4d4d4;border-bottom:1px solid #e6e6e6"><span style="transform:translateX(-50%) scaleX(1.035)">mm f/ s iso</span></div>
<div class="th" style="left:12px;top:437px;width:134px;height:64px"><svg style="position:static;display:block;overflow:hidden" width="128" height="58" viewBox="0 0 100 100" preserveAspectRatio="none"><rect x="0" y="0" width="100" height="100" fill="#1e1e1e" /><rect x="0" y="0" width="100" height="8" fill="#262626" /><rect x="0" y="8" width="9" height="92" fill="#161c28" /><rect x="2" y="10" width="5" height="4" fill="#3070c0" /><rect x="1" y="20" width="2" height="2" fill="#c02020" /><rect x="1" y="30" width="2" height="2" fill="#c02020" /><rect x="1" y="40" width="2" height="2" fill="#c02020" /><rect x="9.5" y="8" width="57.5" height="39" fill="#f2f2f2" /><rect x="14" y="9.5" width="23" height="15.5" fill="none" stroke="#f0c860" stroke-width="1"/><rect x="15" y="12" width="20" height="1.5" fill="#888" /><rect x="15" y="18" width="20" height="1.5" fill="#888" /><rect x="58" y="12" width="7" height="1.5" fill="#888" /><rect x="58" y="18" width="7" height="1.5" fill="#888" /><rect x="15" y="26" width="40" height="1.5" fill="#999" /><rect x="15" y="32" width="36" height="1.5" fill="#999" /><rect x="15" y="38" width="40" height="1.5" fill="#999" /><rect x="71" y="13.5" width="16" height="19" fill="#b06a38" /><rect x="71" y="13.5" width="16" height="7" fill="#e0a060" /><rect x="73" y="40" width="12" height="1.5" fill="#888" /><rect x="71" y="52" width="16" height="14" fill="#3a78b0" /><rect x="9" y="47" width="58" height="8" fill="#262626" /></svg></div>
<div class="a" style="left:156px;top:407px;width:157px;height:204px;background:#e9e9e9;border:1px solid #a9a9a9"></div>
<div class="a" style="left:157px;top:408px;width:155px;height:1px;background:#f4f4f4"></div>
<div class="a" style="left:157px;top:408px;width:1px;height:202px;background:#f4f4f4"></div>
<div class="lb" style="left:157px;top:531px;width:155px;background:#e8dfdd;border-bottom:1px solid #f0e8e7"><span style="transform:translateX(-50%) scaleX(1.035)"></span></div>
<div class="lb" style="left:157px;top:547px;width:155px;background:#e8dfdd;border-bottom:1px solid #f0e8e7"><span style="transform:translateX(-50%) scaleX(0.93)"></span></div>
<div class="lb" style="left:157px;top:563px;width:155px;background:#e8dfdd;border-bottom:1px solid #f0e8e7"><span style="transform:translateX(-50%) scaleX(0.94)"></span></div>
<div class="lb" style="left:157px;top:579px;width:155px;background:#e8dfdd;border-bottom:1px solid #f0e8e7"><span style="transform:translateX(-50%) scaleX(1)"></span></div>
<div class="lb" style="left:157px;top:595px;width:155px;background:#e8dfdd;border-bottom:1px solid #f0e8e7"><span style="transform:translateX(-50%) scaleX(1.035)">mm f/ s iso</span></div>
<div class="th" style="left:183px;top:418px;width:102px;height:102px"><svg style="position:static;display:block;overflow:hidden" width="96" height="96" viewBox="0 0 100 100" preserveAspectRatio="none"><defs><linearGradient id="wg" x1="0" x2="1" y1="0" y2="0"><stop offset="0" stop-color="#9890d8"/><stop offset="0.4" stop-color="#e6e4f2"/><stop offset="1" stop-color="#eef0f4"/></linearGradient></defs><rect x="0" y="0" width="100" height="100" fill="url(#wg)" /><path d="M5 40Q15 12 45 4L5 4Z" fill="#ebe9f4"/><rect x="6" y="32" width="20" height="68" fill="#eceaf4" /><rect x="86" y="52" width="14" height="26" fill="#dcd6ee" /><path d="M17 100Q15 42 35 16Q52 0 68 5Q94 20 98 100Z" fill="#5a2460"/><path d="M26 58Q32 26 58 12L60 20Q40 28 31 62Z" fill="#74306e"/><path d="M29 100L28 50Q33 25 58 17Q78 24 82 48L84 100Z" fill="#f0d6d8"/><rect x="30" y="36.5" width="14" height="2.5" fill="#4a3a7a" rx="1.2"/><rect x="54" y="36.5" width="19" height="2.5" fill="#4a3a7a" rx="1.2"/><ellipse cx="36" cy="46" rx="6" ry="2.4" fill="#2a2440"/><ellipse cx="63" cy="46" rx="7" ry="2.4" fill="#2a2440"/><ellipse cx="36" cy="46.5" rx="3" ry="1.8" fill="#6a78c8"/><ellipse cx="63" cy="46.5" rx="3.2" ry="1.8" fill="#6a78c8"/></svg></div>
<div class="a" style="left:312px;top:407px;width:156px;height:204px;background:#e9e9e9;border:1px solid #a9a9a9"></div>
<div class="a" style="left:313px;top:408px;width:154px;height:1px;background:#f4f4f4"></div>
<div class="a" style="left:313px;top:408px;width:1px;height:202px;background:#f4f4f4"></div>
<div class="lb" style="left:313px;top:531px;width:154px;background:#d4d4d4;border-bottom:1px solid #e6e6e6"><span style="transform:translateX(-50%) scaleX(1.035)"></span></div>
<div class="lb" style="left:313px;top:547px;width:154px;background:#d4d4d4;border-bottom:1px solid #e6e6e6"><span style="transform:translateX(-50%) scaleX(0.93)"></span></div>
<div class="lb" style="left:313px;top:563px;width:154px;background:#d4d4d4;border-bottom:1px solid #e6e6e6"><span style="transform:translateX(-50%) scaleX(0.94)"></span></div>
<div class="lb" style="left:313px;top:579px;width:154px;background:#d4d4d4;border-bottom:1px solid #e6e6e6"><span style="transform:translateX(-50%) scaleX(1)"></span></div>
<div class="lb" style="left:313px;top:595px;width:154px;background:#d4d4d4;border-bottom:1px solid #e6e6e6"><span style="transform:translateX(-50%) scaleX(1.035)">mm f/ s iso</span></div>
<div class="th" style="left:339px;top:418px;width:102px;height:102px"><svg style="position:static;display:block;overflow:hidden" width="96" height="96" viewBox="0 0 100 100" preserveAspectRatio="none"><defs><linearGradient id="wg2" x1="0" x2="1" y1="0" y2="0"><stop offset="0" stop-color="#9890d8"/><stop offset="0.4" stop-color="#e6e4f2"/><stop offset="1" stop-color="#eef0f4"/></linearGradient></defs><rect x="0" y="0" width="100" height="100" fill="url(#wg2)" /><path d="M5 40Q15 12 45 4L5 4Z" fill="#ebe9f4"/><rect x="6" y="32" width="20" height="68" fill="#eceaf4" /><rect x="86" y="52" width="14" height="26" fill="#dcd6ee" /><path d="M17 100Q15 42 35 16Q52 0 68 5Q94 20 98 100Z" fill="#5a2460"/><path d="M26 58Q32 26 58 12L60 20Q40 28 31 62Z" fill="#74306e"/><path d="M29 100L28 50Q33 25 58 17Q78 24 82 48L84 100Z" fill="#f0d6d8"/><rect x="30" y="36.5" width="14" height="2.5" fill="#4a3a7a" rx="1.2"/><rect x="54" y="36.5" width="19" height="2.5" fill="#4a3a7a" rx="1.2"/><ellipse cx="36" cy="46" rx="6" ry="2.4" fill="#2a2440"/><ellipse cx="63" cy="46" rx="7" ry="2.4" fill="#2a2440"/><ellipse cx="36" cy="46.5" rx="3" ry="1.8" fill="#6a78c8"/><ellipse cx="63" cy="46.5" rx="3.2" ry="1.8" fill="#6a78c8"/></svg></div>
<div class="a" style="left:467px;top:407px;width:156px;height:204px;background:#e9e9e9;border:1px solid #a9a9a9"></div>
<div class="a" style="left:468px;top:408px;width:154px;height:1px;background:#f4f4f4"></div>
<div class="a" style="left:468px;top:408px;width:1px;height:202px;background:#f4f4f4"></div>
<div class="lb" style="left:468px;top:531px;width:154px;background:#e8dfdd;border-bottom:1px solid #f0e8e7"><span style="transform:translateX(-50%) scaleX(1.035)"></span></div>
<div class="lb" style="left:468px;top:547px;width:154px;background:#e8dfdd;border-bottom:1px solid #f0e8e7"><span style="transform:translateX(-50%) scaleX(0.93)"></span></div>
<div class="lb" style="left:468px;top:563px;width:154px;background:#e8dfdd;border-bottom:1px solid #f0e8e7"><span style="transform:translateX(-50%) scaleX(0.94)"></span></div>
<div class="lb" style="left:468px;top:579px;width:154px;background:#e8dfdd;border-bottom:1px solid #f0e8e7"><span style="transform:translateX(-50%) scaleX(1)"></span></div>
<div class="lb" style="left:468px;top:595px;width:154px;background:#e8dfdd;border-bottom:1px solid #f0e8e7"><span style="transform:translateX(-50%) scaleX(1.035)">mm f/ s iso</span></div>
<div class="th" style="left:478px;top:424px;width:134px;height:91px"><svg style="position:static;display:block;overflow:hidden" width="128" height="85" viewBox="0 0 100 100" preserveAspectRatio="none"><rect x="0" y="0" width="100" height="100" fill="#e2d6d2" /><rect x="0.8" y="0.8" width="12.4" height="6.6" fill="#c07068" /><rect x="14.8" y="0.8" width="12.4" height="6.6" fill="#a85850" /><rect x="28.8" y="0.8" width="12.4" height="6.6" fill="#b06a66" /><rect x="42.8" y="0.8" width="12.4" height="6.6" fill="#c88078" /><rect x="56.8" y="0.8" width="12.4" height="6.6" fill="#b86058" /><rect x="70.8" y="0.8" width="12.4" height="6.6" fill="#b86058" /><rect x="84.8" y="0.8" width="12.4" height="6.6" fill="#9a5458" /><rect x="98.8" y="0.8" width="12.4" height="6.6" fill="#b86058" /><rect x="112.8" y="0.8" width="12.4" height="6.6" fill="#c07068" /><rect x="55.364860560818734" y="3.638816252572409" width="5.717585446685294" height="2.257841701067515" fill="#e6dad6" /><rect x="39.72635438022215" y="0.9626520005081001" width="8.408378030331086" height="2.1773315182369677" fill="#e6dad6" /><rect x="53.71810094834257" y="3.78979880282995" width="9.045007325853897" height="3.7489907133812217" fill="#e6dad6" /><rect x="-6.2" y="9.100000000000001" width="12.4" height="6.6" fill="#b86058" /><rect x="7.8" y="9.100000000000001" width="12.4" height="6.6" fill="#9a5458" /><rect x="21.8" y="9.100000000000001" width="12.4" height="6.6" fill="#9a5458" /><rect x="35.8" y="9.100000000000001" width="12.4" height="6.6" fill="#b06a66" /><rect x="49.8" y="9.100000000000001" width="12.4" height="6.6" fill="#b86058" /><rect x="63.8" y="9.100000000000001" width="12.4" height="6.6" fill="#a85850" /><rect x="77.8" y="9.100000000000001" width="12.4" height="6.6" fill="#b86058" /><rect x="91.8" y="9.100000000000001" width="12.4" height="6.6" fill="#9a5458" /><rect x="105.8" y="9.100000000000001" width="12.4" height="6.6" fill="#a85850" /><rect x="27.512882201509246" y="8.877020333429751" width="4.942337904626947" height="2.925445472305803" fill="#e6dad6" /><rect x="77.53200411640299" y="9.022905519695751" width="8.65280130929973" height="3.916740406778552" fill="#e6dad6" /><rect x="35.377766558944465" y="10.490977862838232" width="4.502311799786585" height="2.1788035098986978" fill="#e6dad6" /><rect x="0.8" y="17.400000000000002" width="12.4" height="6.6" fill="#a85850" /><rect x="14.8" y="17.400000000000002" width="12.4" height="6.6" fill="#b06a66" /><rect x="28.8" y="17.400000000000002" width="12.4" height="6.6" fill="#c88078" /><rect x="42.8" y="17.400000000000002" width="12.4" height="6.6" fill="#9a5458" /><rect x="56.8" y="17.400000000000002" width="12.4" height="6.6" fill="#b06a66" /><rect x="70.8" y="17.400000000000002" width="12.4" height="6.6" fill="#c07068" /><rect x="84.8" y="17.400000000000002" width="12.4" height="6.6" fill="#b06a66" /><rect x="98.8" y="17.400000000000002" width="12.4" height="6.6" fill="#9a5458" /><rect x="112.8" y="17.400000000000002" width="12.4" height="6.6" fill="#b06a66" /><rect x="34.350323814733805" y="17.5937063394302" width="5.438133996665146" height="4.3394888917527314" fill="#e6dad6" /><rect x="7.7762260255981355" y="17.800996474182504" width="7.960930876442045" height="3.03042706987512" fill="#e6dad6" /><rect x="42.63924809064036" y="19.035836076145614" width="4.585606939677344" height="3.5357984919426473" fill="#e6dad6" /><rect x="-6.2" y="25.700000000000003" width="12.4" height="6.6" fill="#a85850" /><rect x="7.8" y="25.700000000000003" width="12.4" height="6.6" fill="#c07068" /><rect x="21.8" y="25.700000000000003" width="12.4" height="6.6" fill="#a85850" /><rect x="35.8" y="25.700000000000003" width="12.4" height="6.6" fill="#b06a66" /><rect x="49.8" y="25.700000000000003" width="12.4" height="6.6" fill="#b06a66" /><rect x="63.8" y="25.700000000000003" width="12.4" height="6.6" fill="#b86058" /><rect x="77.8" y="25.700000000000003" width="12.4" height="6.6" fill="#c88078" /><rect x="91.8" y="25.700000000000003" width="12.4" height="6.6" fill="#b86058" /><rect x="105.8" y="25.700000000000003" width="12.4" height="6.6" fill="#9a5458" /><rect x="54.437464326351474" y="28.401911247323554" width="6.509980102784774" height="4.085886098820978" fill="#e6dad6" /><rect x="56.46513832497675" y="27.21958081712997" width="7.649642650411304" height="4.519903341537624" fill="#e6dad6" /><rect x="89.74470403525406" y="26.79639334967858" width="9.313217643797396" height="2.182008282791659" fill="#e6dad6" /><rect x="0.8" y="34.0" width="12.4" height="6.6" fill="#c88078" /><rect x="14.8" y="34.0" width="12.4" height="6.6" fill="#c07068" /><rect x="28.8" y="34.0" width="12.4" height="6.6" fill="#c88078" /><rect x="42.8" y="34.0" width="12.4" height="6.6" fill="#9a5458" /><rect x="56.8" y="34.0" width="12.4" height="6.6" fill="#c88078" /><rect x="70.8" y="34.0" width="12.4" height="6.6" fill="#b06a66" /><rect x="84.8" y="34.0" width="12.4" height="6.6" fill="#c07068" /><rect x="98.8" y="34.0" width="12.4" height="6.6" fill="#c88078" /><rect x="112.8" y="34.0" width="12.4" height="6.6" fill="#b06a66" /><rect x="84.26882776261871" y="34.58802102275381" width="11.52518853316875" height="3.066392328621038" fill="#e6dad6" /><rect x="58.037356630892305" y="35.17477197822793" width="5.745662198557436" height="2.862295779496585" fill="#e6dad6" /><rect x="70.14452106150544" y="34.791590714184935" width="11.334529809440491" height="3.4895200970898856" fill="#e6dad6" /><rect x="-6.2" y="42.3" width="12.4" height="6.6" fill="#a85850" /><rect x="7.8" y="42.3" width="12.4" height="6.6" fill="#b06a66" /><rect x="21.8" y="42.3" width="12.4" height="6.6" fill="#b06a66" /><rect x="35.8" y="42.3" width="12.4" height="6.6" fill="#9a5458" /><rect x="49.8" y="42.3" width="12.4" height="6.6" fill="#c07068" /><rect x="63.8" y="42.3" width="12.4" height="6.6" fill="#a85850" /><rect x="77.8" y="42.3" width="12.4" height="6.6" fill="#b06a66" /><rect x="91.8" y="42.3" width="12.4" height="6.6" fill="#9a5458" /><rect x="105.8" y="42.3" width="12.4" height="6.6" fill="#c07068" /><rect x="67.10768740216768" y="45.44586832400474" width="9.461784475099613" height="3.1413239007681133" fill="#e6dad6" /><rect x="21.921393270324806" y="41.83193877864533" width="5.210387064931205" height="3.9755500309169904" fill="#e6dad6" /><rect x="1.145990685160891" y="44.824374246273145" width="5.4587429918495785" height="2.845792166980213" fill="#e6dad6" /><rect x="0.8" y="50.6" width="12.4" height="6.6" fill="#a85850" /><rect x="14.8" y="50.6" width="12.4" height="6.6" fill="#b06a66" /><rect x="28.8" y="50.6" width="12.4" height="6.6" fill="#9a5458" /><rect x="42.8" y="50.6" width="12.4" height="6.6" fill="#c07068" /><rect x="56.8" y="50.6" width="12.4" height="6.6" fill="#9a5458" /><rect x="70.8" y="50.6" width="12.4" height="6.6" fill="#9a5458" /><rect x="84.8" y="50.6" width="12.4" height="6.6" fill="#c07068" /><rect x="98.8" y="50.6" width="12.4" height="6.6" fill="#a85850" /><rect x="112.8" y="50.6" width="12.4" height="6.6" fill="#c88078" /><rect x="81.62418517449264" y="53.60089579873064" width="9.23973170973063" height="4.219354243293246" fill="#e6dad6" /><rect x="43.3811536092731" y="53.28391800463109" width="11.615089766652178" height="4.04172530318513" fill="#e6dad6" /><rect x="53.1308153813779" y="51.39227852222261" width="7.152960127802913" height="3.444568454495584" fill="#e6dad6" /><rect x="-6.2" y="58.900000000000006" width="12.4" height="6.6" fill="#b06a66" /><rect x="7.8" y="58.900000000000006" width="12.4" height="6.6" fill="#b86058" /><rect x="21.8" y="58.900000000000006" width="12.4" height="6.6" fill="#a85850" /><rect x="35.8" y="58.900000000000006" width="12.4" height="6.6" fill="#b86058" /><rect x="49.8" y="58.900000000000006" width="12.4" height="6.6" fill="#a85850" /><rect x="63.8" y="58.900000000000006" width="12.4" height="6.6" fill="#b06a66" /><rect x="77.8" y="58.900000000000006" width="12.4" height="6.6" fill="#a85850" /><rect x="91.8" y="58.900000000000006" width="12.4" height="6.6" fill="#b86058" /><rect x="105.8" y="58.900000000000006" width="12.4" height="6.6" fill="#c07068" /><rect x="57.069089747925716" y="58.509518390900894" width="8.534268865064675" height="3.6098560639053066" fill="#e6dad6" /><rect x="90.1501320640962" y="60.55494905190173" width="4.562524609227918" height="2.6238580483362597" fill="#e6dad6" /><rect x="35.741789371611894" y="60.637638314135614" width="11.64374419137177" height="3.806837566886025" fill="#e6dad6" /><rect x="0.8" y="67.2" width="12.4" height="6.6" fill="#b06a66" /><rect x="14.8" y="67.2" width="12.4" height="6.6" fill="#b86058" /><rect x="28.8" y="67.2" width="12.4" height="6.6" fill="#b86058" /><rect x="42.8" y="67.2" width="12.4" height="6.6" fill="#b06a66" /><rect x="56.8" y="67.2" width="12.4" height="6.6" fill="#b06a66" /><rect x="70.8" y="67.2" width="12.4" height="6.6" fill="#b06a66" /><rect x="84.8" y="67.2" width="12.4" height="6.6" fill="#b06a66" /><rect x="98.8" y="67.2" width="12.4" height="6.6" fill="#c07068" /><rect x="112.8" y="67.2" width="12.4" height="6.6" fill="#b86058" /><rect x="13.691161570756304" y="69.39869568176972" width="9.922809795424753" height="3.4358658305299734" fill="#e6dad6" /><rect x="65.74539304030438" y="68.46533807584929" width="5.6417200536123255" height="4.856062841301949" fill="#e6dad6" /><rect x="34.366483605856004" y="69.16027034351744" width="11.313166262331157" height="4.274428878607812" fill="#e6dad6" /><rect x="-6.2" y="75.5" width="12.4" height="6.6" fill="#c07068" /><rect x="7.8" y="75.5" width="12.4" height="6.6" fill="#c88078" /><rect x="21.8" y="75.5" width="12.4" height="6.6" fill="#b86058" /><rect x="35.8" y="75.5" width="12.4" height="6.6" fill="#c88078" /><rect x="49.8" y="75.5" width="12.4" height="6.6" fill="#c07068" /><rect x="63.8" y="75.5" width="12.4" height="6.6" fill="#9a5458" /><rect x="77.8" y="75.5" width="12.4" height="6.6" fill="#c07068" /><rect x="91.8" y="75.5" width="12.4" height="6.6" fill="#a85850" /><rect x="105.8" y="75.5" width="12.4" height="6.6" fill="#c07068" /><rect x="73.33410129819296" y="76.83036958997153" width="10.232439130705417" height="2.988994985143287" fill="#e6dad6" /><rect x="21.188958944802586" y="77.94604498709438" width="11.879408404727126" height="4.557886396239981" fill="#e6dad6" /><rect x="76.57746555463841" y="77.9733317733015" width="9.918984163005714" height="2.6802184700947547" fill="#e6dad6" /><rect x="0.8" y="83.8" width="12.4" height="6.6" fill="#9a5458" /><rect x="14.8" y="83.8" width="12.4" height="6.6" fill="#b06a66" /><rect x="28.8" y="83.8" width="12.4" height="6.6" fill="#c07068" /><rect x="42.8" y="83.8" width="12.4" height="6.6" fill="#c88078" /><rect x="56.8" y="83.8" width="12.4" height="6.6" fill="#b86058" /><rect x="70.8" y="83.8" width="12.4" height="6.6" fill="#b86058" /><rect x="84.8" y="83.8" width="12.4" height="6.6" fill="#c07068" /><rect x="98.8" y="83.8" width="12.4" height="6.6" fill="#b06a66" /><rect x="112.8" y="83.8" width="12.4" height="6.6" fill="#c07068" /><rect x="18.396269871216887" y="85.42055612672911" width="6.754247394038896" height="4.425697228394922" fill="#e6dad6" /><rect x="68.69715630161475" y="84.39807864889504" width="11.796119830884688" height="2.241614376465879" fill="#e6dad6" /><rect x="9.704929005729799" y="84.88031992902476" width="6.701899838708243" height="3.447959906400734" fill="#e6dad6" /><rect x="-6.2" y="92.10000000000001" width="12.4" height="6.6" fill="#9a5458" /><rect x="7.8" y="92.10000000000001" width="12.4" height="6.6" fill="#b86058" /><rect x="21.8" y="92.10000000000001" width="12.4" height="6.6" fill="#b06a66" /><rect x="35.8" y="92.10000000000001" width="12.4" height="6.6" fill="#c88078" /><rect x="49.8" y="92.10000000000001" width="12.4" height="6.6" fill="#c07068" /><rect x="63.8" y="92.10000000000001" width="12.4" height="6.6" fill="#c88078" /><rect x="77.8" y="92.10000000000001" width="12.4" height="6.6" fill="#b86058" /><rect x="91.8" y="92.10000000000001" width="12.4" height="6.6" fill="#c88078" /><rect x="105.8" y="92.10000000000001" width="12.4" height="6.6" fill="#b86058" /><rect x="86.42882806741368" y="94.42921153639237" width="10.001123678643667" height="3.4340982337820005" fill="#e6dad6" /><rect x="16.95956324206949" y="94.45654172408112" width="6.660137598916879" height="4.402470706690073" fill="#e6dad6" /><rect x="92.30744245330504" y="92.8833539802778" width="7.211094542941612" height="4.840391019394679" fill="#e6dad6" /><rect x="40" y="14" width="9" height="10" fill="#201818" /><rect x="43" y="15" width="7" height="10" fill="#c8906a" /><rect x="37" y="26" width="16" height="40" fill="#1e5a68" /><rect x="46" y="24" width="5" height="6" fill="#f0f0f0" /><rect x="39" y="66" width="14" height="34" fill="#8ab0d0" /></svg></div>
<div class="a" style="left:622px;top:407px;width:156px;height:204px;background:#e9e9e9;border:1px solid #a9a9a9"></div>
<div class="a" style="left:623px;top:408px;width:154px;height:1px;background:#f4f4f4"></div>
<div class="a" style="left:623px;top:408px;width:1px;height:202px;background:#f4f4f4"></div>
<div class="lb" style="left:623px;top:531px;width:154px;background:#e8dfdd;border-bottom:1px solid #f0e8e7"><span style="transform:translateX(-50%) scaleX(1.035)"></span></div>
<div class="lb" style="left:623px;top:547px;width:154px;background:#e8dfdd;border-bottom:1px solid #f0e8e7"><span style="transform:translateX(-50%) scaleX(0.93)"></span></div>
<div class="lb" style="left:623px;top:563px;width:154px;background:#e8dfdd;border-bottom:1px solid #f0e8e7"><span style="transform:translateX(-50%) scaleX(0.94)"></span></div>
<div class="lb" style="left:623px;top:579px;width:154px;background:#e8dfdd;border-bottom:1px solid #f0e8e7"><span style="transform:translateX(-50%) scaleX(1)"></span></div>
<div class="lb" style="left:623px;top:595px;width:154px;background:#e8dfdd;border-bottom:1px solid #f0e8e7"><span style="transform:translateX(-50%) scaleX(1.035)">mm f/ s iso</span></div>
<div class="th" style="left:673px;top:418px;width:54px;height:102px"><svg style="position:static;display:block;overflow:hidden" width="48" height="96" viewBox="0 0 100 100" preserveAspectRatio="none"><rect x="0" y="0" width="100" height="100" fill="#1e2422" /><rect x="0" y="0" width="100" height="8" fill="#111" /><rect x="40" y="3" width="20" height="2" fill="#888" /><rect x="0" y="24" width="100" height="76" fill="#b80808" /><rect x="17" y="24" width="66" height="76" fill="#c8d4d4" /><rect x="22" y="24" width="10" height="76" fill="#30b0e8" /><rect x="22" y="40" width="61" height="8" fill="#30b0e8" transform="rotate(-12 50 44)"/><path d="M22 100Q26 70 45 68Q64 70 68 100Z" fill="#6a3a2a"/><rect x="32" y="78" width="28" height="22" fill="#d8a890" /></svg></div>
<div class="a" style="left:777px;top:407px;width:156px;height:204px;background:#e9e9e9;border:1px solid #a9a9a9"></div>
<div class="a" style="left:778px;top:408px;width:154px;height:1px;background:#f4f4f4"></div>
<div class="a" style="left:778px;top:408px;width:1px;height:202px;background:#f4f4f4"></div>
<div class="lb" style="left:778px;top:531px;width:154px;background:#e8dfdd;border-bottom:1px solid #f0e8e7"><span style="transform:translateX(-50%) scaleX(1.035)"></span></div>
<div class="lb" style="left:778px;top:547px;width:154px;background:#e8dfdd;border-bottom:1px solid #f0e8e7"><span style="transform:translateX(-50%) scaleX(0.93)"></span></div>
<div class="lb" style="left:778px;top:563px;width:154px;background:#e8dfdd;border-bottom:1px solid #f0e8e7"><span style="transform:translateX(-50%) scaleX(0.94)"></span></div>
<div class="lb" style="left:778px;top:579px;width:154px;background:#e8dfdd;border-bottom:1px solid #f0e8e7"><span style="transform:translateX(-50%) scaleX(1)"></span></div>
<div class="lb" style="left:778px;top:595px;width:154px;background:#e8dfdd;border-bottom:1px solid #f0e8e7"><span style="transform:translateX(-50%) scaleX(1.035)">mm f/ s iso</span></div>
<div class="th" style="left:788px;top:429px;width:134px;height:81px"><svg style="position:static;display:block;overflow:hidden" width="128" height="75" viewBox="0 0 100 100" preserveAspectRatio="none"><rect x="0" y="0" width="100" height="100" fill="#1e1e1e" /><rect x="0" y="0" width="100" height="9" fill="#141414" /><rect x="2" y="2" width="4" height="5" fill="#c07010" /><rect x="25" y="4" width="8" height="3" fill="#3a5a80" /><rect x="0" y="11" width="27" height="89" fill="#272727" /><rect x="2" y="14" width="23" height="3" fill="#3a3a3a" /><rect x="2" y="21" width="23" height="2" fill="#555" /><rect x="2" y="28" width="8" height="4" fill="#444" /><rect x="28" y="11" width="72" height="5" fill="#242424" /><rect x="29" y="18" width="69" height="82" fill="#5a5a5a" /><rect x="69" y="64" width="8" height="10" fill="#1a1210" /><rect x="65" y="73" width="16" height="27" fill="#f0f0f0" /></svg></div>
<div class="a" style="left:1063px;top:0;width:13px;height:473px;background:#f0f0f0"></div>
<div class="a" style="left:1063px;top:19px;width:13px;height:18px;background:#cdcdcd"></div>
<svg style="left:1066px;top:7px" width="9" height="6"><path d="M0.5 5L4.5 1L8.5 5" stroke="#555" stroke-width="2" fill="none"/></svg>
<svg style="left:1066px;top:461px" width="9" height="6"><path d="M0.5 1L4.5 5L8.5 1" stroke="#555" stroke-width="2" fill="none"/></svg>
</div>

<!-- INFO / PREVIEW -->
<div class="a" style="left:0;top:610px;width:782px;height:19px;background:#dadada;border:1px solid #c0c0c0;border-left:none"></div>
<div class="t" style="left:1px;top:614px">Info</div>
<svg style="left:744px;top:615px" width="9" height="9" viewBox="0 0 9 9"><path d="M3 2.5V0.8H8.2V6H6.5" stroke="#222" stroke-width="1.1" fill="none"/><rect x="3" y="0.5" width="5.5" height="1.6" fill="#222"/><rect x="0.8" y="3.3" width="5.4" height="5.2" fill="#fafafa" stroke="#222" stroke-width="1.1"/><rect x="0.5" y="3" width="6" height="1.6" fill="#222"/></svg><svg style="left:766px;top:616px" width="8" height="8"><path d="M0.6 0.6L7.4 7.4M7.4 0.6L0.6 7.4" stroke="#2a2a2a" stroke-width="1.7"/></svg>
<div class="a" style="left:0;top:631px;width:780px;height:157px;background:#fff;border-right:1px solid #d8d8d8;border-bottom:1px solid #d8d8d8"></div>
<div class="a" style="left:786px;top:610px;width:454px;height:19px;background:#dadada;border:1px solid #c0c0c0;border-right:none"></div>
<div class="t sx" style="left:791px;top:614px;transform:scaleX(0.96)">Preview</div>
<svg style="left:1207px;top:615px" width="9" height="9" viewBox="0 0 9 9"><path d="M3 2.5V0.8H8.2V6H6.5" stroke="#222" stroke-width="1.1" fill="none"/><rect x="3" y="0.5" width="5.5" height="1.6" fill="#222"/><rect x="0.8" y="3.3" width="5.4" height="5.2" fill="#fafafa" stroke="#222" stroke-width="1.1"/><rect x="0.5" y="3" width="6" height="1.6" fill="#222"/></svg><svg style="left:1229px;top:616px" width="8" height="8"><path d="M0.6 0.6L7.4 7.4M7.4 0.6L0.6 7.4" stroke="#2a2a2a" stroke-width="1.7"/></svg>

<!-- BOTTOM TABS -->
<div class="a" style="left:0;top:789px;width:782px;height:1px;background:#a0a0a0"></div>
<div class="a" style="left:42px;top:789px;width:307px;height:19px;background:#f0f0f0;border-top:1px solid #a0a0a0;border-bottom:1px solid #d4d4d4"></div>
<div class="a" style="left:110px;top:790px;width:1px;height:17px;background:#d4d4d4"></div>
<div class="a" style="left:182px;top:790px;width:1px;height:17px;background:#d4d4d4"></div>
<div class="a" style="left:258px;top:790px;width:1px;height:17px;background:#d4d4d4"></div>
<div class="a" style="left:0;top:788px;width:42px;height:21px;background:#fff"></div>
<div class="t" style="left:8px;top:792px">Info</div>
<div class="t sx" style="left:52px;top:792px;transform:scaleX(0.9)">Metadata</div>
<div class="t sx" style="left:121px;top:792px;transform:scaleX(0.88)">Histogram</div>
<div class="t sx" style="left:193px;top:792px;transform:scaleX(0.9)">Categories</div>
<div class="t sx" style="left:270px;top:792px;transform:scaleX(0.91)">Category Sets</div>

<!-- STATUS -->
<div class="t sx" style="left:-1px;top:815px;transform:scaleX(0.936)">6045 object(s) [36.98 GiB] [Free disk space: 35.05 GiB]</div>
<div class="a" style="left:278px;top:812px;width:1px;height:18px;background:#d0d0d0"></div>
<div class="a" style="left:754px;top:813px;width:437px;height:16px;background:#e6e6e6;border:1px solid #bcbcbc"></div>
<div class="a" style="left:755px;top:814px;width:24px;height:14px;background:#06b025"></div>
<div class="t" style="left:1199px;top:815px">6%</div>
<div class="a" style="left:1226px;top:812px;width:1px;height:17px;background:#d8d8d8"></div>
<svg style="left:1233px;top:823px" width="7" height="7"><rect x="4" y="0" width="2" height="2" fill="#b8b8b8"/><rect x="0" y="4" width="2" height="2" fill="#b8b8b8"/><rect x="4" y="4" width="2" height="2" fill="#b8b8b8"/></svg>
</body></html>
